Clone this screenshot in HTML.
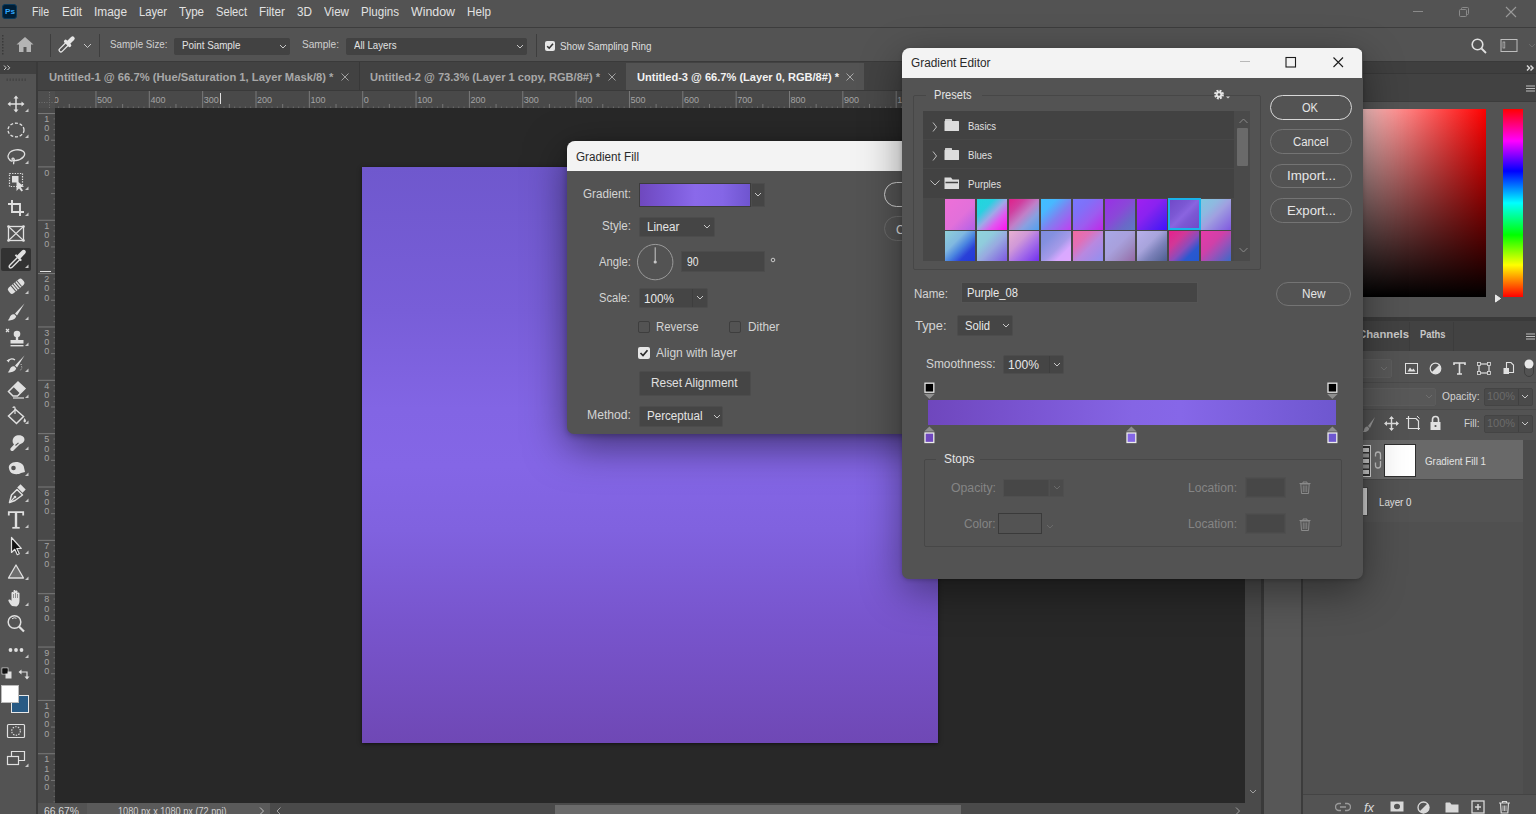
<!DOCTYPE html>
<html><head><meta charset="utf-8">
<style>
*{margin:0;padding:0;box-sizing:border-box}
html,body{width:1536px;height:814px;overflow:hidden;background:#282828;font-family:"Liberation Sans",sans-serif;position:relative}
.a{position:absolute}
.t{position:absolute;white-space:nowrap;line-height:1;transform-origin:0 0}
</style></head><body>
<div class="a" style="left:0px;top:0px;width:1536px;height:27px;background:#535353;"></div>
<div class="a" style="left:0px;top:27px;width:1536px;height:1px;background:#3d3d3d;"></div>
<div class="a" style="left:2px;top:4px;width:15px;height:15px;background:#001e36;border-radius:3px;border:1px solid #0a3a5c"></div>
<div class="t" style="left:4.5px;top:8.23px;font-size:8px;color:#31a8ff;font-weight:700;transform:scaleX(1.0207);">Ps</div>
<div class="t" style="left:32px;top:5.64px;font-size:12px;color:#e2e2e2;font-weight:400;transform:scaleX(0.8788);">File</div>
<div class="t" style="left:62px;top:5.64px;font-size:12px;color:#e2e2e2;font-weight:400;transform:scaleX(0.9668);">Edit</div>
<div class="t" style="left:94px;top:5.64px;font-size:12px;color:#e2e2e2;font-weight:400;transform:scaleX(0.9892);">Image</div>
<div class="t" style="left:139px;top:5.64px;font-size:12px;color:#e2e2e2;font-weight:400;transform:scaleX(0.9324);">Layer</div>
<div class="t" style="left:179px;top:5.64px;font-size:12px;color:#e2e2e2;font-weight:400;transform:scaleX(0.9610);">Type</div>
<div class="t" style="left:216px;top:5.64px;font-size:12px;color:#e2e2e2;font-weight:400;transform:scaleX(0.9293);">Select</div>
<div class="t" style="left:259px;top:5.64px;font-size:12px;color:#e2e2e2;font-weight:400;transform:scaleX(0.9748);">Filter</div>
<div class="t" style="left:297px;top:5.64px;font-size:12px;color:#e2e2e2;font-weight:400;transform:scaleX(0.9776);">3D</div>
<div class="t" style="left:324px;top:5.64px;font-size:12px;color:#e2e2e2;font-weight:400;transform:scaleX(0.9691);">View</div>
<div class="t" style="left:361px;top:5.64px;font-size:12px;color:#e2e2e2;font-weight:400;transform:scaleX(0.9655);">Plugins</div>
<div class="t" style="left:411px;top:5.64px;font-size:12px;color:#e2e2e2;font-weight:400;transform:scaleX(1.0307);">Window</div>
<div class="t" style="left:467px;top:5.64px;font-size:12px;color:#e2e2e2;font-weight:400;transform:scaleX(0.9722);">Help</div>
<div class="a" style="left:1413px;top:11px;width:10px;height:1px;background:#8a8a8a;"></div>
<svg class="a" style="left:1458px;top:6px;" width="12" height="12" viewBox="0 0 12 12"><rect x="1.5" y="3.5" width="7" height="7" rx="1" fill="none" stroke="#8a8a8a"/><path d="M3.5 3.5V2.5a1 1 0 0 1 1-1h5a1 1 0 0 1 1 1v5a1 1 0 0 1-1 1h-1" fill="none" stroke="#8a8a8a"/></svg>
<svg class="a" style="left:1505px;top:6px;" width="12" height="12" viewBox="0 0 12 12"><path d="M1 1L11 11M11 1L1 11" stroke="#9a9a9a" stroke-width="1.1"/></svg>
<div class="a" style="left:0px;top:28px;width:1536px;height:33px;background:#535353;"></div>
<div class="a" style="left:0px;top:61px;width:1536px;height:1px;background:#3a3a3a;"></div>
<svg class="a" style="left:1px;top:34px;" width="4" height="21" viewBox="0 0 4 21"><rect x="1" y="1" width="1.5" height="1.5" fill="#3a3a3a"/><rect x="1" y="4" width="1.5" height="1.5" fill="#3a3a3a"/><rect x="1" y="7" width="1.5" height="1.5" fill="#3a3a3a"/><rect x="1" y="10" width="1.5" height="1.5" fill="#3a3a3a"/><rect x="1" y="13" width="1.5" height="1.5" fill="#3a3a3a"/><rect x="1" y="16" width="1.5" height="1.5" fill="#3a3a3a"/><rect x="1" y="19" width="1.5" height="1.5" fill="#3a3a3a"/></svg>
<svg class="a" style="left:16px;top:36px;" width="18" height="17" viewBox="0 0 18 17"><path d="M9 1L0.5 8.5H3V16H7.5V11H10.5V16H15V8.5H17.5Z" fill="#b4b4b4"/></svg>
<div class="a" style="left:50px;top:34px;width:1px;height:23px;background:#3e3e3e;"></div>
<svg class="a" style="left:58px;top:35px;" width="18" height="18" viewBox="0 0 18 18"><path d="M9.3 8.7L2.9 15.1" stroke="#e6e6e6" stroke-width="4.8" stroke-linecap="round"/><path d="M9.3 8.7L2.9 15.1" stroke="#535353" stroke-width="2.3" stroke-linecap="round"/><path d="M7.6 6.4L11.6 10.4" stroke="#e6e6e6" stroke-width="3.4" stroke-linecap="round"/><path d="M10.5 7.5L14.6 3.4" stroke="#e6e6e6" stroke-width="4.2" stroke-linecap="round"/></svg>
<svg class="a" style="left:83px;top:43px;" width="9" height="6" viewBox="0 0 9 6"><path d="M1 1L4.5 4.5L8 1" fill="none" stroke="#c8c8c8" stroke-width="1"/></svg>
<div class="a" style="left:99px;top:34px;width:1px;height:23px;background:#3e3e3e;"></div>
<div class="t" style="left:109.5px;top:38.99px;font-size:11px;color:#cfcfcf;font-weight:400;transform:scaleX(0.8872);">Sample Size:</div>
<div class="a" style="left:174px;top:38px;width:116px;height:17px;background:#424242;border-radius:2px"></div>
<div class="t" style="left:181.5px;top:40.19px;font-size:11px;color:#e2e2e2;font-weight:400;transform:scaleX(0.8940);">Point Sample</div>
<svg class="a" style="left:279px;top:44px;" width="8" height="6" viewBox="0 0 8 6"><path d="M1 1L4 4L7 1" fill="none" stroke="#c8c8c8" stroke-width="1"/></svg>
<div class="t" style="left:302.4px;top:38.99px;font-size:11px;color:#cfcfcf;font-weight:400;transform:scaleX(0.9168);">Sample:</div>
<div class="a" style="left:346px;top:38px;width:181px;height:17px;background:#424242;border-radius:2px"></div>
<div class="t" style="left:353.5px;top:40.19px;font-size:11px;color:#e2e2e2;font-weight:400;transform:scaleX(0.8800);">All Layers</div>
<svg class="a" style="left:516px;top:44px;" width="8" height="6" viewBox="0 0 8 6"><path d="M1 1L4 4L7 1" fill="none" stroke="#c8c8c8" stroke-width="1"/></svg>
<div class="a" style="left:536px;top:34px;width:1px;height:23px;background:#3e3e3e;"></div>
<div class="a" style="left:545px;top:41px;width:10px;height:10px;background:#e6e6e6;border-radius:2px"></div>
<svg class="a" style="left:545px;top:41px;" width="10" height="10" viewBox="0 0 10 10"><path d="M2.2 5.2L4.2 7.2L8 2.8" fill="none" stroke="#333" stroke-width="1.6"/></svg>
<div class="t" style="left:560.4px;top:41.19px;font-size:11px;color:#dedede;font-weight:400;transform:scaleX(0.8960);">Show Sampling Ring</div>
<svg class="a" style="left:1471px;top:38px;" width="17" height="16" viewBox="0 0 17 16"><circle cx="6.5" cy="6.5" r="5.3" fill="none" stroke="#e0e0e0" stroke-width="1.6"/><path d="M10.5 10.5L15 15" stroke="#e0e0e0" stroke-width="1.8"/></svg>
<svg class="a" style="left:1500px;top:38px;" width="19" height="15" viewBox="0 0 19 15"><rect x="1" y="1.5" width="16" height="12" fill="none" stroke="#bdbdbd" stroke-width="1"/><rect x="3" y="4" width="1.8" height="6" fill="none" stroke="#bdbdbd" stroke-width=".7"/></svg>
<svg class="a" style="left:1528px;top:43px;" width="8" height="6" viewBox="0 0 8 6"><path d="M1 1L4 4L7 1" fill="none" stroke="#6a6a6a" stroke-width="1"/></svg>
<div class="a" style="left:0px;top:62px;width:36px;height:752px;background:#535353;"></div>
<div class="a" style="left:0px;top:62px;width:36px;height:12px;background:#404040;"></div>
<svg class="a" style="left:3px;top:64px;" width="9" height="8" viewBox="0 0 9 8"><path d="M1 1.5L3.2 3.8L1 6M4.5 1.5L6.7 3.8L4.5 6" fill="none" stroke="#d0d0d0" stroke-width="1"/></svg>
<svg class="a" style="left:6px;top:78px;" width="21" height="4" viewBox="0 0 21 4"><rect x="0.5" y="0.5" width="1.4" height="2.5" fill="#444"/><rect x="3.5" y="0.5" width="1.4" height="2.5" fill="#444"/><rect x="6.5" y="0.5" width="1.4" height="2.5" fill="#444"/><rect x="9.5" y="0.5" width="1.4" height="2.5" fill="#444"/><rect x="12.5" y="0.5" width="1.4" height="2.5" fill="#444"/><rect x="15.5" y="0.5" width="1.4" height="2.5" fill="#444"/><rect x="18.5" y="0.5" width="1.4" height="2.5" fill="#444"/></svg>
<div class="a" style="left:36px;top:62px;width:2px;height:752px;background:#3a3a3a;"></div>
<div class="a" style="left:38px;top:62px;width:1223px;height:28px;background:#424242;"></div>
<div class="a" style="left:38px;top:90px;width:1223px;height:1px;background:#3a3a3a;"></div>
<div class="a" style="left:38px;top:91px;width:1223px;height:17px;background:#494949;"></div>
<div class="a" style="left:38px;top:108px;width:17px;height:695px;background:#494949;"></div>
<div class="a" style="left:55px;top:108px;width:1190px;height:695px;background:#282828;"></div>
<div class="a" style="left:359px;top:62px;width:1px;height:28px;background:#383838;"></div>
<div class="a" style="left:626px;top:63px;width:238px;height:27px;background:#535353;"></div>
<div class="t" style="left:49.4px;top:72.07px;font-size:11.5px;color:#a8a8a8;font-weight:700;transform:scaleX(0.9750);">Untitled-1 @ 66.7% (Hue/Saturation 1, Layer Mask/8) *</div>
<svg class="a" style="left:341px;top:73px;" width="8" height="8" viewBox="0 0 8 8"><path d="M.5 .5L7.5 7.5M7.5 .5L.5 7.5" stroke="#a0a0a0" stroke-width="1"/></svg>
<div class="t" style="left:370px;top:72.07px;font-size:11.5px;color:#a8a8a8;font-weight:700;transform:scaleX(0.9617);">Untitled-2 @ 73.3% (Layer 1 copy, RGB/8#) *</div>
<svg class="a" style="left:608px;top:73px;" width="8" height="8" viewBox="0 0 8 8"><path d="M.5 .5L7.5 7.5M7.5 .5L.5 7.5" stroke="#a0a0a0" stroke-width="1"/></svg>
<div class="t" style="left:636.5px;top:72.07px;font-size:11.5px;color:#f2f2f2;font-weight:700;transform:scaleX(0.9620);">Untitled-3 @ 66.7% (Layer 0, RGB/8#) *</div>
<svg class="a" style="left:846px;top:73px;" width="8" height="8" viewBox="0 0 8 8"><path d="M.5 .5L7.5 7.5M7.5 .5L.5 7.5" stroke="#a8a8a8" stroke-width="1"/></svg>
<svg class="a" style="left:55px;top:91px;" width="1190" height="17" viewBox="0 0 1190 17"><rect x="3.10" y="15.5" width="1" height="1.5" fill="#6a6a6a"/><rect x="8.44" y="15.5" width="1" height="1.5" fill="#6a6a6a"/><rect x="13.77" y="13" width="1" height="4" fill="#767676"/><rect x="19.11" y="15.5" width="1" height="1.5" fill="#6a6a6a"/><rect x="24.44" y="15.5" width="1" height="1.5" fill="#6a6a6a"/><rect x="29.78" y="15.5" width="1" height="1.5" fill="#6a6a6a"/><rect x="35.12" y="15.5" width="1" height="1.5" fill="#6a6a6a"/><rect x="40.45" y="0" width="1" height="17" fill="#7a7a7a"/><rect x="45.78" y="15.5" width="1" height="1.5" fill="#6a6a6a"/><rect x="51.12" y="15.5" width="1" height="1.5" fill="#6a6a6a"/><rect x="56.45" y="15.5" width="1" height="1.5" fill="#6a6a6a"/><rect x="61.79" y="15.5" width="1" height="1.5" fill="#6a6a6a"/><rect x="67.12" y="13" width="1" height="4" fill="#767676"/><rect x="72.46" y="15.5" width="1" height="1.5" fill="#6a6a6a"/><rect x="77.79" y="15.5" width="1" height="1.5" fill="#6a6a6a"/><rect x="83.13" y="15.5" width="1" height="1.5" fill="#6a6a6a"/><rect x="88.47" y="15.5" width="1" height="1.5" fill="#6a6a6a"/><rect x="93.80" y="0" width="1" height="17" fill="#7a7a7a"/><rect x="99.13" y="15.5" width="1" height="1.5" fill="#6a6a6a"/><rect x="104.47" y="15.5" width="1" height="1.5" fill="#6a6a6a"/><rect x="109.80" y="15.5" width="1" height="1.5" fill="#6a6a6a"/><rect x="115.14" y="15.5" width="1" height="1.5" fill="#6a6a6a"/><rect x="120.47" y="13" width="1" height="4" fill="#767676"/><rect x="125.81" y="15.5" width="1" height="1.5" fill="#6a6a6a"/><rect x="131.14" y="15.5" width="1" height="1.5" fill="#6a6a6a"/><rect x="136.48" y="15.5" width="1" height="1.5" fill="#6a6a6a"/><rect x="141.81" y="15.5" width="1" height="1.5" fill="#6a6a6a"/><rect x="147.15" y="0" width="1" height="17" fill="#7a7a7a"/><rect x="152.48" y="15.5" width="1" height="1.5" fill="#6a6a6a"/><rect x="157.82" y="15.5" width="1" height="1.5" fill="#6a6a6a"/><rect x="163.15" y="15.5" width="1" height="1.5" fill="#6a6a6a"/><rect x="168.49" y="15.5" width="1" height="1.5" fill="#6a6a6a"/><rect x="173.82" y="13" width="1" height="4" fill="#767676"/><rect x="179.16" y="15.5" width="1" height="1.5" fill="#6a6a6a"/><rect x="184.50" y="15.5" width="1" height="1.5" fill="#6a6a6a"/><rect x="189.83" y="15.5" width="1" height="1.5" fill="#6a6a6a"/><rect x="195.16" y="15.5" width="1" height="1.5" fill="#6a6a6a"/><rect x="200.50" y="0" width="1" height="17" fill="#7a7a7a"/><rect x="205.83" y="15.5" width="1" height="1.5" fill="#6a6a6a"/><rect x="211.17" y="15.5" width="1" height="1.5" fill="#6a6a6a"/><rect x="216.50" y="15.5" width="1" height="1.5" fill="#6a6a6a"/><rect x="221.84" y="15.5" width="1" height="1.5" fill="#6a6a6a"/><rect x="227.17" y="13" width="1" height="4" fill="#767676"/><rect x="232.51" y="15.5" width="1" height="1.5" fill="#6a6a6a"/><rect x="237.84" y="15.5" width="1" height="1.5" fill="#6a6a6a"/><rect x="243.18" y="15.5" width="1" height="1.5" fill="#6a6a6a"/><rect x="248.51" y="15.5" width="1" height="1.5" fill="#6a6a6a"/><rect x="253.85" y="0" width="1" height="17" fill="#7a7a7a"/><rect x="259.19" y="15.5" width="1" height="1.5" fill="#6a6a6a"/><rect x="264.52" y="15.5" width="1" height="1.5" fill="#6a6a6a"/><rect x="269.86" y="15.5" width="1" height="1.5" fill="#6a6a6a"/><rect x="275.19" y="15.5" width="1" height="1.5" fill="#6a6a6a"/><rect x="280.52" y="13" width="1" height="4" fill="#767676"/><rect x="285.86" y="15.5" width="1" height="1.5" fill="#6a6a6a"/><rect x="291.19" y="15.5" width="1" height="1.5" fill="#6a6a6a"/><rect x="296.53" y="15.5" width="1" height="1.5" fill="#6a6a6a"/><rect x="301.87" y="15.5" width="1" height="1.5" fill="#6a6a6a"/><rect x="307.20" y="0" width="1" height="17" fill="#7a7a7a"/><rect x="312.53" y="15.5" width="1" height="1.5" fill="#6a6a6a"/><rect x="317.87" y="15.5" width="1" height="1.5" fill="#6a6a6a"/><rect x="323.20" y="15.5" width="1" height="1.5" fill="#6a6a6a"/><rect x="328.54" y="15.5" width="1" height="1.5" fill="#6a6a6a"/><rect x="333.88" y="13" width="1" height="4" fill="#767676"/><rect x="339.21" y="15.5" width="1" height="1.5" fill="#6a6a6a"/><rect x="344.54" y="15.5" width="1" height="1.5" fill="#6a6a6a"/><rect x="349.88" y="15.5" width="1" height="1.5" fill="#6a6a6a"/><rect x="355.21" y="15.5" width="1" height="1.5" fill="#6a6a6a"/><rect x="360.55" y="0" width="1" height="17" fill="#7a7a7a"/><rect x="365.88" y="15.5" width="1" height="1.5" fill="#6a6a6a"/><rect x="371.22" y="15.5" width="1" height="1.5" fill="#6a6a6a"/><rect x="376.56" y="15.5" width="1" height="1.5" fill="#6a6a6a"/><rect x="381.89" y="15.5" width="1" height="1.5" fill="#6a6a6a"/><rect x="387.23" y="13" width="1" height="4" fill="#767676"/><rect x="392.56" y="15.5" width="1" height="1.5" fill="#6a6a6a"/><rect x="397.89" y="15.5" width="1" height="1.5" fill="#6a6a6a"/><rect x="403.23" y="15.5" width="1" height="1.5" fill="#6a6a6a"/><rect x="408.56" y="15.5" width="1" height="1.5" fill="#6a6a6a"/><rect x="413.90" y="0" width="1" height="17" fill="#7a7a7a"/><rect x="419.24" y="15.5" width="1" height="1.5" fill="#6a6a6a"/><rect x="424.57" y="15.5" width="1" height="1.5" fill="#6a6a6a"/><rect x="429.90" y="15.5" width="1" height="1.5" fill="#6a6a6a"/><rect x="435.24" y="15.5" width="1" height="1.5" fill="#6a6a6a"/><rect x="440.57" y="13" width="1" height="4" fill="#767676"/><rect x="445.91" y="15.5" width="1" height="1.5" fill="#6a6a6a"/><rect x="451.25" y="15.5" width="1" height="1.5" fill="#6a6a6a"/><rect x="456.58" y="15.5" width="1" height="1.5" fill="#6a6a6a"/><rect x="461.91" y="15.5" width="1" height="1.5" fill="#6a6a6a"/><rect x="467.25" y="0" width="1" height="17" fill="#7a7a7a"/><rect x="472.59" y="15.5" width="1" height="1.5" fill="#6a6a6a"/><rect x="477.92" y="15.5" width="1" height="1.5" fill="#6a6a6a"/><rect x="483.25" y="15.5" width="1" height="1.5" fill="#6a6a6a"/><rect x="488.59" y="15.5" width="1" height="1.5" fill="#6a6a6a"/><rect x="493.92" y="13" width="1" height="4" fill="#767676"/><rect x="499.26" y="15.5" width="1" height="1.5" fill="#6a6a6a"/><rect x="504.60" y="15.5" width="1" height="1.5" fill="#6a6a6a"/><rect x="509.93" y="15.5" width="1" height="1.5" fill="#6a6a6a"/><rect x="515.26" y="15.5" width="1" height="1.5" fill="#6a6a6a"/><rect x="520.60" y="0" width="1" height="17" fill="#7a7a7a"/><rect x="525.93" y="15.5" width="1" height="1.5" fill="#6a6a6a"/><rect x="531.27" y="15.5" width="1" height="1.5" fill="#6a6a6a"/><rect x="536.61" y="15.5" width="1" height="1.5" fill="#6a6a6a"/><rect x="541.94" y="15.5" width="1" height="1.5" fill="#6a6a6a"/><rect x="547.27" y="13" width="1" height="4" fill="#767676"/><rect x="552.61" y="15.5" width="1" height="1.5" fill="#6a6a6a"/><rect x="557.94" y="15.5" width="1" height="1.5" fill="#6a6a6a"/><rect x="563.28" y="15.5" width="1" height="1.5" fill="#6a6a6a"/><rect x="568.62" y="15.5" width="1" height="1.5" fill="#6a6a6a"/><rect x="573.95" y="0" width="1" height="17" fill="#7a7a7a"/><rect x="579.28" y="15.5" width="1" height="1.5" fill="#6a6a6a"/><rect x="584.62" y="15.5" width="1" height="1.5" fill="#6a6a6a"/><rect x="589.95" y="15.5" width="1" height="1.5" fill="#6a6a6a"/><rect x="595.29" y="15.5" width="1" height="1.5" fill="#6a6a6a"/><rect x="600.62" y="13" width="1" height="4" fill="#767676"/><rect x="605.96" y="15.5" width="1" height="1.5" fill="#6a6a6a"/><rect x="611.30" y="15.5" width="1" height="1.5" fill="#6a6a6a"/><rect x="616.63" y="15.5" width="1" height="1.5" fill="#6a6a6a"/><rect x="621.97" y="15.5" width="1" height="1.5" fill="#6a6a6a"/><rect x="627.30" y="0" width="1" height="17" fill="#7a7a7a"/><rect x="632.63" y="15.5" width="1" height="1.5" fill="#6a6a6a"/><rect x="637.97" y="15.5" width="1" height="1.5" fill="#6a6a6a"/><rect x="643.31" y="15.5" width="1" height="1.5" fill="#6a6a6a"/><rect x="648.64" y="15.5" width="1" height="1.5" fill="#6a6a6a"/><rect x="653.98" y="13" width="1" height="4" fill="#767676"/><rect x="659.31" y="15.5" width="1" height="1.5" fill="#6a6a6a"/><rect x="664.64" y="15.5" width="1" height="1.5" fill="#6a6a6a"/><rect x="669.98" y="15.5" width="1" height="1.5" fill="#6a6a6a"/><rect x="675.32" y="15.5" width="1" height="1.5" fill="#6a6a6a"/><rect x="680.65" y="0" width="1" height="17" fill="#7a7a7a"/><rect x="685.98" y="15.5" width="1" height="1.5" fill="#6a6a6a"/><rect x="691.32" y="15.5" width="1" height="1.5" fill="#6a6a6a"/><rect x="696.65" y="15.5" width="1" height="1.5" fill="#6a6a6a"/><rect x="701.99" y="15.5" width="1" height="1.5" fill="#6a6a6a"/><rect x="707.33" y="13" width="1" height="4" fill="#767676"/><rect x="712.66" y="15.5" width="1" height="1.5" fill="#6a6a6a"/><rect x="718.00" y="15.5" width="1" height="1.5" fill="#6a6a6a"/><rect x="723.33" y="15.5" width="1" height="1.5" fill="#6a6a6a"/><rect x="728.66" y="15.5" width="1" height="1.5" fill="#6a6a6a"/><rect x="734.00" y="0" width="1" height="17" fill="#7a7a7a"/><rect x="739.34" y="15.5" width="1" height="1.5" fill="#6a6a6a"/><rect x="744.67" y="15.5" width="1" height="1.5" fill="#6a6a6a"/><rect x="750.01" y="15.5" width="1" height="1.5" fill="#6a6a6a"/><rect x="755.34" y="15.5" width="1" height="1.5" fill="#6a6a6a"/><rect x="760.67" y="13" width="1" height="4" fill="#767676"/><rect x="766.01" y="15.5" width="1" height="1.5" fill="#6a6a6a"/><rect x="771.35" y="15.5" width="1" height="1.5" fill="#6a6a6a"/><rect x="776.68" y="15.5" width="1" height="1.5" fill="#6a6a6a"/><rect x="782.02" y="15.5" width="1" height="1.5" fill="#6a6a6a"/><rect x="787.35" y="0" width="1" height="17" fill="#7a7a7a"/><rect x="792.68" y="15.5" width="1" height="1.5" fill="#6a6a6a"/><rect x="798.02" y="15.5" width="1" height="1.5" fill="#6a6a6a"/><rect x="803.36" y="15.5" width="1" height="1.5" fill="#6a6a6a"/><rect x="808.69" y="15.5" width="1" height="1.5" fill="#6a6a6a"/><rect x="814.02" y="13" width="1" height="4" fill="#767676"/><rect x="819.36" y="15.5" width="1" height="1.5" fill="#6a6a6a"/><rect x="824.69" y="15.5" width="1" height="1.5" fill="#6a6a6a"/><rect x="830.03" y="15.5" width="1" height="1.5" fill="#6a6a6a"/><rect x="835.37" y="15.5" width="1" height="1.5" fill="#6a6a6a"/><rect x="840.70" y="0" width="1" height="17" fill="#7a7a7a"/><rect x="846.04" y="15.5" width="1" height="1.5" fill="#6a6a6a"/><rect x="851.37" y="15.5" width="1" height="1.5" fill="#6a6a6a"/><rect x="856.71" y="15.5" width="1" height="1.5" fill="#6a6a6a"/><rect x="862.04" y="15.5" width="1" height="1.5" fill="#6a6a6a"/><rect x="867.38" y="13" width="1" height="4" fill="#767676"/><rect x="872.71" y="15.5" width="1" height="1.5" fill="#6a6a6a"/><rect x="878.05" y="15.5" width="1" height="1.5" fill="#6a6a6a"/><rect x="883.38" y="15.5" width="1" height="1.5" fill="#6a6a6a"/><rect x="888.71" y="15.5" width="1" height="1.5" fill="#6a6a6a"/><rect x="894.05" y="0" width="1" height="17" fill="#7a7a7a"/><rect x="899.38" y="15.5" width="1" height="1.5" fill="#6a6a6a"/><rect x="904.72" y="15.5" width="1" height="1.5" fill="#6a6a6a"/><rect x="910.06" y="15.5" width="1" height="1.5" fill="#6a6a6a"/><rect x="915.39" y="15.5" width="1" height="1.5" fill="#6a6a6a"/><rect x="920.72" y="13" width="1" height="4" fill="#767676"/><rect x="926.06" y="15.5" width="1" height="1.5" fill="#6a6a6a"/><rect x="931.39" y="15.5" width="1" height="1.5" fill="#6a6a6a"/><rect x="936.73" y="15.5" width="1" height="1.5" fill="#6a6a6a"/><rect x="942.07" y="15.5" width="1" height="1.5" fill="#6a6a6a"/><rect x="947.40" y="0" width="1" height="17" fill="#7a7a7a"/><rect x="952.73" y="15.5" width="1" height="1.5" fill="#6a6a6a"/><rect x="958.07" y="15.5" width="1" height="1.5" fill="#6a6a6a"/><rect x="963.40" y="15.5" width="1" height="1.5" fill="#6a6a6a"/><rect x="968.74" y="15.5" width="1" height="1.5" fill="#6a6a6a"/><rect x="974.08" y="13" width="1" height="4" fill="#767676"/><rect x="979.41" y="15.5" width="1" height="1.5" fill="#6a6a6a"/><rect x="984.74" y="15.5" width="1" height="1.5" fill="#6a6a6a"/><rect x="990.08" y="15.5" width="1" height="1.5" fill="#6a6a6a"/><rect x="995.41" y="15.5" width="1" height="1.5" fill="#6a6a6a"/><rect x="1000.75" y="0" width="1" height="17" fill="#7a7a7a"/><rect x="1006.09" y="15.5" width="1" height="1.5" fill="#6a6a6a"/><rect x="1011.42" y="15.5" width="1" height="1.5" fill="#6a6a6a"/><rect x="1016.76" y="15.5" width="1" height="1.5" fill="#6a6a6a"/><rect x="1022.09" y="15.5" width="1" height="1.5" fill="#6a6a6a"/><rect x="1027.42" y="13" width="1" height="4" fill="#767676"/><rect x="1032.76" y="15.5" width="1" height="1.5" fill="#6a6a6a"/><rect x="1038.10" y="15.5" width="1" height="1.5" fill="#6a6a6a"/><rect x="1043.43" y="15.5" width="1" height="1.5" fill="#6a6a6a"/><rect x="1048.77" y="15.5" width="1" height="1.5" fill="#6a6a6a"/><rect x="1054.10" y="0" width="1" height="17" fill="#7a7a7a"/><rect x="1059.43" y="15.5" width="1" height="1.5" fill="#6a6a6a"/><rect x="1064.77" y="15.5" width="1" height="1.5" fill="#6a6a6a"/><rect x="1070.11" y="15.5" width="1" height="1.5" fill="#6a6a6a"/><rect x="1075.44" y="15.5" width="1" height="1.5" fill="#6a6a6a"/><rect x="1080.78" y="13" width="1" height="4" fill="#767676"/><rect x="1086.11" y="15.5" width="1" height="1.5" fill="#6a6a6a"/><rect x="1091.44" y="15.5" width="1" height="1.5" fill="#6a6a6a"/><rect x="1096.78" y="15.5" width="1" height="1.5" fill="#6a6a6a"/><rect x="1102.12" y="15.5" width="1" height="1.5" fill="#6a6a6a"/><rect x="1107.45" y="0" width="1" height="17" fill="#7a7a7a"/><rect x="1112.79" y="15.5" width="1" height="1.5" fill="#6a6a6a"/><rect x="1118.12" y="15.5" width="1" height="1.5" fill="#6a6a6a"/><rect x="1123.46" y="15.5" width="1" height="1.5" fill="#6a6a6a"/><rect x="1128.79" y="15.5" width="1" height="1.5" fill="#6a6a6a"/><rect x="1134.12" y="13" width="1" height="4" fill="#767676"/><rect x="1139.46" y="15.5" width="1" height="1.5" fill="#6a6a6a"/><rect x="1144.80" y="15.5" width="1" height="1.5" fill="#6a6a6a"/><rect x="1150.13" y="15.5" width="1" height="1.5" fill="#6a6a6a"/><rect x="1155.46" y="15.5" width="1" height="1.5" fill="#6a6a6a"/><rect x="1160.80" y="0" width="1" height="17" fill="#7a7a7a"/><rect x="1166.13" y="15.5" width="1" height="1.5" fill="#6a6a6a"/><rect x="1171.47" y="15.5" width="1" height="1.5" fill="#6a6a6a"/><rect x="1176.81" y="15.5" width="1" height="1.5" fill="#6a6a6a"/><rect x="1182.14" y="15.5" width="1" height="1.5" fill="#6a6a6a"/><rect x="1187.47" y="13" width="1" height="4" fill="#767676"/></svg>
<div class="a" style="left:55px;top:91px;width:1190px;height:17px;overflow:hidden">
<div class="t" style="left:-11.3px;top:5.38px;font-size:9px;color:#a4a4a4;font-weight:400;">600</div>
<div class="t" style="left:42.05px;top:5.38px;font-size:9px;color:#a4a4a4;font-weight:400;">500</div>
<div class="t" style="left:95.4px;top:5.38px;font-size:9px;color:#a4a4a4;font-weight:400;">400</div>
<div class="t" style="left:148.75px;top:5.38px;font-size:9px;color:#a4a4a4;font-weight:400;">300</div>
<div class="t" style="left:202.1px;top:5.38px;font-size:9px;color:#a4a4a4;font-weight:400;">200</div>
<div class="t" style="left:255.45px;top:5.38px;font-size:9px;color:#a4a4a4;font-weight:400;">100</div>
<div class="t" style="left:308.8px;top:5.38px;font-size:9px;color:#a4a4a4;font-weight:400;">0</div>
<div class="t" style="left:362.15px;top:5.38px;font-size:9px;color:#a4a4a4;font-weight:400;">100</div>
<div class="t" style="left:415.5px;top:5.38px;font-size:9px;color:#a4a4a4;font-weight:400;">200</div>
<div class="t" style="left:468.85px;top:5.38px;font-size:9px;color:#a4a4a4;font-weight:400;">300</div>
<div class="t" style="left:522.2px;top:5.38px;font-size:9px;color:#a4a4a4;font-weight:400;">400</div>
<div class="t" style="left:575.55px;top:5.38px;font-size:9px;color:#a4a4a4;font-weight:400;">500</div>
<div class="t" style="left:628.9px;top:5.38px;font-size:9px;color:#a4a4a4;font-weight:400;">600</div>
<div class="t" style="left:682.25px;top:5.38px;font-size:9px;color:#a4a4a4;font-weight:400;">700</div>
<div class="t" style="left:735.6px;top:5.38px;font-size:9px;color:#a4a4a4;font-weight:400;">800</div>
<div class="t" style="left:788.95px;top:5.38px;font-size:9px;color:#a4a4a4;font-weight:400;">900</div>
<div class="t" style="left:842.3px;top:5.38px;font-size:9px;color:#a4a4a4;font-weight:400;">1000</div>
<div class="t" style="left:895.65px;top:5.38px;font-size:9px;color:#a4a4a4;font-weight:400;">1100</div>
<div class="t" style="left:949.0px;top:5.38px;font-size:9px;color:#a4a4a4;font-weight:400;">1200</div>
<div class="t" style="left:1002.35px;top:5.38px;font-size:9px;color:#a4a4a4;font-weight:400;">1300</div>
<div class="t" style="left:1055.7px;top:5.38px;font-size:9px;color:#a4a4a4;font-weight:400;">1400</div>
<div class="t" style="left:1109.05px;top:5.38px;font-size:9px;color:#a4a4a4;font-weight:400;">1500</div>
<div class="t" style="left:1162.4px;top:5.38px;font-size:9px;color:#a4a4a4;font-weight:400;">1600</div>
</div>
<div class="a" style="left:220px;top:93px;width:1px;height:11px;background:#e0e0e0;"></div>
<div class="a" style="left:38px;top:91px;width:17px;height:17px;background:#4e4e4e;"></div>
<svg class="a" style="left:38px;top:91px;" width="17" height="17" viewBox="0 0 17 17"><path d="M11.5 1V17M1 11.5H17" stroke="#707070" stroke-width="1" stroke-dasharray="1 1.5"/></svg>
<svg class="a" style="left:38px;top:108px;" width="17" height="695" viewBox="0 0 17 695"><rect x="0" y="5.05" width="17" height="1" fill="#7a7a7a"/><rect x="15.5" y="10.39" width="1.5" height="1" fill="#6a6a6a"/><rect x="15.5" y="15.72" width="1.5" height="1" fill="#6a6a6a"/><rect x="15.5" y="21.06" width="1.5" height="1" fill="#6a6a6a"/><rect x="15.5" y="26.39" width="1.5" height="1" fill="#6a6a6a"/><rect x="13" y="31.72" width="4" height="1" fill="#767676"/><rect x="15.5" y="37.06" width="1.5" height="1" fill="#6a6a6a"/><rect x="15.5" y="42.40" width="1.5" height="1" fill="#6a6a6a"/><rect x="15.5" y="47.73" width="1.5" height="1" fill="#6a6a6a"/><rect x="15.5" y="53.06" width="1.5" height="1" fill="#6a6a6a"/><rect x="0" y="58.40" width="17" height="1" fill="#7a7a7a"/><rect x="15.5" y="63.74" width="1.5" height="1" fill="#6a6a6a"/><rect x="15.5" y="69.07" width="1.5" height="1" fill="#6a6a6a"/><rect x="15.5" y="74.41" width="1.5" height="1" fill="#6a6a6a"/><rect x="15.5" y="79.74" width="1.5" height="1" fill="#6a6a6a"/><rect x="13" y="85.08" width="4" height="1" fill="#767676"/><rect x="15.5" y="90.41" width="1.5" height="1" fill="#6a6a6a"/><rect x="15.5" y="95.75" width="1.5" height="1" fill="#6a6a6a"/><rect x="15.5" y="101.08" width="1.5" height="1" fill="#6a6a6a"/><rect x="15.5" y="106.42" width="1.5" height="1" fill="#6a6a6a"/><rect x="0" y="111.75" width="17" height="1" fill="#7a7a7a"/><rect x="15.5" y="117.09" width="1.5" height="1" fill="#6a6a6a"/><rect x="15.5" y="122.42" width="1.5" height="1" fill="#6a6a6a"/><rect x="15.5" y="127.75" width="1.5" height="1" fill="#6a6a6a"/><rect x="15.5" y="133.09" width="1.5" height="1" fill="#6a6a6a"/><rect x="13" y="138.43" width="4" height="1" fill="#767676"/><rect x="15.5" y="143.76" width="1.5" height="1" fill="#6a6a6a"/><rect x="15.5" y="149.10" width="1.5" height="1" fill="#6a6a6a"/><rect x="15.5" y="154.43" width="1.5" height="1" fill="#6a6a6a"/><rect x="15.5" y="159.76" width="1.5" height="1" fill="#6a6a6a"/><rect x="0" y="165.10" width="17" height="1" fill="#7a7a7a"/><rect x="15.5" y="170.44" width="1.5" height="1" fill="#6a6a6a"/><rect x="15.5" y="175.77" width="1.5" height="1" fill="#6a6a6a"/><rect x="15.5" y="181.11" width="1.5" height="1" fill="#6a6a6a"/><rect x="15.5" y="186.44" width="1.5" height="1" fill="#6a6a6a"/><rect x="13" y="191.77" width="4" height="1" fill="#767676"/><rect x="15.5" y="197.11" width="1.5" height="1" fill="#6a6a6a"/><rect x="15.5" y="202.45" width="1.5" height="1" fill="#6a6a6a"/><rect x="15.5" y="207.78" width="1.5" height="1" fill="#6a6a6a"/><rect x="15.5" y="213.12" width="1.5" height="1" fill="#6a6a6a"/><rect x="0" y="218.45" width="17" height="1" fill="#7a7a7a"/><rect x="15.5" y="223.79" width="1.5" height="1" fill="#6a6a6a"/><rect x="15.5" y="229.12" width="1.5" height="1" fill="#6a6a6a"/><rect x="15.5" y="234.46" width="1.5" height="1" fill="#6a6a6a"/><rect x="15.5" y="239.79" width="1.5" height="1" fill="#6a6a6a"/><rect x="13" y="245.12" width="4" height="1" fill="#767676"/><rect x="15.5" y="250.46" width="1.5" height="1" fill="#6a6a6a"/><rect x="15.5" y="255.80" width="1.5" height="1" fill="#6a6a6a"/><rect x="15.5" y="261.13" width="1.5" height="1" fill="#6a6a6a"/><rect x="15.5" y="266.47" width="1.5" height="1" fill="#6a6a6a"/><rect x="0" y="271.80" width="17" height="1" fill="#7a7a7a"/><rect x="15.5" y="277.13" width="1.5" height="1" fill="#6a6a6a"/><rect x="15.5" y="282.47" width="1.5" height="1" fill="#6a6a6a"/><rect x="15.5" y="287.81" width="1.5" height="1" fill="#6a6a6a"/><rect x="15.5" y="293.14" width="1.5" height="1" fill="#6a6a6a"/><rect x="13" y="298.48" width="4" height="1" fill="#767676"/><rect x="15.5" y="303.81" width="1.5" height="1" fill="#6a6a6a"/><rect x="15.5" y="309.14" width="1.5" height="1" fill="#6a6a6a"/><rect x="15.5" y="314.48" width="1.5" height="1" fill="#6a6a6a"/><rect x="15.5" y="319.82" width="1.5" height="1" fill="#6a6a6a"/><rect x="0" y="325.15" width="17" height="1" fill="#7a7a7a"/><rect x="15.5" y="330.49" width="1.5" height="1" fill="#6a6a6a"/><rect x="15.5" y="335.82" width="1.5" height="1" fill="#6a6a6a"/><rect x="15.5" y="341.15" width="1.5" height="1" fill="#6a6a6a"/><rect x="15.5" y="346.49" width="1.5" height="1" fill="#6a6a6a"/><rect x="13" y="351.83" width="4" height="1" fill="#767676"/><rect x="15.5" y="357.16" width="1.5" height="1" fill="#6a6a6a"/><rect x="15.5" y="362.50" width="1.5" height="1" fill="#6a6a6a"/><rect x="15.5" y="367.83" width="1.5" height="1" fill="#6a6a6a"/><rect x="15.5" y="373.17" width="1.5" height="1" fill="#6a6a6a"/><rect x="0" y="378.50" width="17" height="1" fill="#7a7a7a"/><rect x="15.5" y="383.84" width="1.5" height="1" fill="#6a6a6a"/><rect x="15.5" y="389.17" width="1.5" height="1" fill="#6a6a6a"/><rect x="15.5" y="394.50" width="1.5" height="1" fill="#6a6a6a"/><rect x="15.5" y="399.84" width="1.5" height="1" fill="#6a6a6a"/><rect x="13" y="405.18" width="4" height="1" fill="#767676"/><rect x="15.5" y="410.51" width="1.5" height="1" fill="#6a6a6a"/><rect x="15.5" y="415.85" width="1.5" height="1" fill="#6a6a6a"/><rect x="15.5" y="421.18" width="1.5" height="1" fill="#6a6a6a"/><rect x="15.5" y="426.51" width="1.5" height="1" fill="#6a6a6a"/><rect x="0" y="431.85" width="17" height="1" fill="#7a7a7a"/><rect x="15.5" y="437.18" width="1.5" height="1" fill="#6a6a6a"/><rect x="15.5" y="442.52" width="1.5" height="1" fill="#6a6a6a"/><rect x="15.5" y="447.86" width="1.5" height="1" fill="#6a6a6a"/><rect x="15.5" y="453.19" width="1.5" height="1" fill="#6a6a6a"/><rect x="13" y="458.52" width="4" height="1" fill="#767676"/><rect x="15.5" y="463.86" width="1.5" height="1" fill="#6a6a6a"/><rect x="15.5" y="469.20" width="1.5" height="1" fill="#6a6a6a"/><rect x="15.5" y="474.53" width="1.5" height="1" fill="#6a6a6a"/><rect x="15.5" y="479.87" width="1.5" height="1" fill="#6a6a6a"/><rect x="0" y="485.20" width="17" height="1" fill="#7a7a7a"/><rect x="15.5" y="490.53" width="1.5" height="1" fill="#6a6a6a"/><rect x="15.5" y="495.87" width="1.5" height="1" fill="#6a6a6a"/><rect x="15.5" y="501.21" width="1.5" height="1" fill="#6a6a6a"/><rect x="15.5" y="506.54" width="1.5" height="1" fill="#6a6a6a"/><rect x="13" y="511.88" width="4" height="1" fill="#767676"/><rect x="15.5" y="517.21" width="1.5" height="1" fill="#6a6a6a"/><rect x="15.5" y="522.54" width="1.5" height="1" fill="#6a6a6a"/><rect x="15.5" y="527.88" width="1.5" height="1" fill="#6a6a6a"/><rect x="15.5" y="533.22" width="1.5" height="1" fill="#6a6a6a"/><rect x="0" y="538.55" width="17" height="1" fill="#7a7a7a"/><rect x="15.5" y="543.88" width="1.5" height="1" fill="#6a6a6a"/><rect x="15.5" y="549.22" width="1.5" height="1" fill="#6a6a6a"/><rect x="15.5" y="554.56" width="1.5" height="1" fill="#6a6a6a"/><rect x="15.5" y="559.89" width="1.5" height="1" fill="#6a6a6a"/><rect x="13" y="565.23" width="4" height="1" fill="#767676"/><rect x="15.5" y="570.56" width="1.5" height="1" fill="#6a6a6a"/><rect x="15.5" y="575.89" width="1.5" height="1" fill="#6a6a6a"/><rect x="15.5" y="581.23" width="1.5" height="1" fill="#6a6a6a"/><rect x="15.5" y="586.57" width="1.5" height="1" fill="#6a6a6a"/><rect x="0" y="591.90" width="17" height="1" fill="#7a7a7a"/><rect x="15.5" y="597.24" width="1.5" height="1" fill="#6a6a6a"/><rect x="15.5" y="602.57" width="1.5" height="1" fill="#6a6a6a"/><rect x="15.5" y="607.91" width="1.5" height="1" fill="#6a6a6a"/><rect x="15.5" y="613.24" width="1.5" height="1" fill="#6a6a6a"/><rect x="13" y="618.58" width="4" height="1" fill="#767676"/><rect x="15.5" y="623.91" width="1.5" height="1" fill="#6a6a6a"/><rect x="15.5" y="629.25" width="1.5" height="1" fill="#6a6a6a"/><rect x="15.5" y="634.58" width="1.5" height="1" fill="#6a6a6a"/><rect x="15.5" y="639.91" width="1.5" height="1" fill="#6a6a6a"/><rect x="0" y="645.25" width="17" height="1" fill="#7a7a7a"/><rect x="15.5" y="650.58" width="1.5" height="1" fill="#6a6a6a"/><rect x="15.5" y="655.92" width="1.5" height="1" fill="#6a6a6a"/><rect x="15.5" y="661.25" width="1.5" height="1" fill="#6a6a6a"/><rect x="15.5" y="666.59" width="1.5" height="1" fill="#6a6a6a"/><rect x="13" y="671.92" width="4" height="1" fill="#767676"/><rect x="15.5" y="677.26" width="1.5" height="1" fill="#6a6a6a"/><rect x="15.5" y="682.59" width="1.5" height="1" fill="#6a6a6a"/><rect x="15.5" y="687.93" width="1.5" height="1" fill="#6a6a6a"/><rect x="15.5" y="693.26" width="1.5" height="1" fill="#6a6a6a"/></svg>
<div class="a" style="left:38px;top:108px;width:17px;height:695px;overflow:hidden">
<div class="t" style="left:6.2px;top:-46.12px;font-size:9px;color:#a4a4a4;font-weight:400;">2</div>
<div class="t" style="left:6.2px;top:-36.92px;font-size:9px;color:#a4a4a4;font-weight:400;">0</div>
<div class="t" style="left:6.2px;top:-27.72px;font-size:9px;color:#a4a4a4;font-weight:400;">0</div>
<div class="t" style="left:6.2px;top:7.23px;font-size:9px;color:#a4a4a4;font-weight:400;">1</div>
<div class="t" style="left:6.2px;top:16.43px;font-size:9px;color:#a4a4a4;font-weight:400;">0</div>
<div class="t" style="left:6.2px;top:25.63px;font-size:9px;color:#a4a4a4;font-weight:400;">0</div>
<div class="t" style="left:6.2px;top:60.58px;font-size:9px;color:#a4a4a4;font-weight:400;">0</div>
<div class="t" style="left:6.2px;top:113.93px;font-size:9px;color:#a4a4a4;font-weight:400;">1</div>
<div class="t" style="left:6.2px;top:123.13px;font-size:9px;color:#a4a4a4;font-weight:400;">0</div>
<div class="t" style="left:6.2px;top:132.33px;font-size:9px;color:#a4a4a4;font-weight:400;">0</div>
<div class="t" style="left:6.2px;top:167.28px;font-size:9px;color:#a4a4a4;font-weight:400;">2</div>
<div class="t" style="left:6.2px;top:176.48px;font-size:9px;color:#a4a4a4;font-weight:400;">0</div>
<div class="t" style="left:6.2px;top:185.68px;font-size:9px;color:#a4a4a4;font-weight:400;">0</div>
<div class="t" style="left:6.2px;top:220.63px;font-size:9px;color:#a4a4a4;font-weight:400;">3</div>
<div class="t" style="left:6.2px;top:229.83px;font-size:9px;color:#a4a4a4;font-weight:400;">0</div>
<div class="t" style="left:6.2px;top:239.03px;font-size:9px;color:#a4a4a4;font-weight:400;">0</div>
<div class="t" style="left:6.2px;top:273.98px;font-size:9px;color:#a4a4a4;font-weight:400;">4</div>
<div class="t" style="left:6.2px;top:283.18px;font-size:9px;color:#a4a4a4;font-weight:400;">0</div>
<div class="t" style="left:6.2px;top:292.38px;font-size:9px;color:#a4a4a4;font-weight:400;">0</div>
<div class="t" style="left:6.2px;top:327.33px;font-size:9px;color:#a4a4a4;font-weight:400;">5</div>
<div class="t" style="left:6.2px;top:336.53px;font-size:9px;color:#a4a4a4;font-weight:400;">0</div>
<div class="t" style="left:6.2px;top:345.73px;font-size:9px;color:#a4a4a4;font-weight:400;">0</div>
<div class="t" style="left:6.2px;top:380.68px;font-size:9px;color:#a4a4a4;font-weight:400;">6</div>
<div class="t" style="left:6.2px;top:389.88px;font-size:9px;color:#a4a4a4;font-weight:400;">0</div>
<div class="t" style="left:6.2px;top:399.08px;font-size:9px;color:#a4a4a4;font-weight:400;">0</div>
<div class="t" style="left:6.2px;top:434.03px;font-size:9px;color:#a4a4a4;font-weight:400;">7</div>
<div class="t" style="left:6.2px;top:443.23px;font-size:9px;color:#a4a4a4;font-weight:400;">0</div>
<div class="t" style="left:6.2px;top:452.43px;font-size:9px;color:#a4a4a4;font-weight:400;">0</div>
<div class="t" style="left:6.2px;top:487.38px;font-size:9px;color:#a4a4a4;font-weight:400;">8</div>
<div class="t" style="left:6.2px;top:496.58px;font-size:9px;color:#a4a4a4;font-weight:400;">0</div>
<div class="t" style="left:6.2px;top:505.78px;font-size:9px;color:#a4a4a4;font-weight:400;">0</div>
<div class="t" style="left:6.2px;top:540.73px;font-size:9px;color:#a4a4a4;font-weight:400;">9</div>
<div class="t" style="left:6.2px;top:549.93px;font-size:9px;color:#a4a4a4;font-weight:400;">0</div>
<div class="t" style="left:6.2px;top:559.13px;font-size:9px;color:#a4a4a4;font-weight:400;">0</div>
<div class="t" style="left:6.2px;top:594.08px;font-size:9px;color:#a4a4a4;font-weight:400;">1</div>
<div class="t" style="left:6.2px;top:603.28px;font-size:9px;color:#a4a4a4;font-weight:400;">0</div>
<div class="t" style="left:6.2px;top:612.48px;font-size:9px;color:#a4a4a4;font-weight:400;">0</div>
<div class="t" style="left:6.2px;top:621.68px;font-size:9px;color:#a4a4a4;font-weight:400;">0</div>
<div class="t" style="left:6.2px;top:647.43px;font-size:9px;color:#a4a4a4;font-weight:400;">1</div>
<div class="t" style="left:6.2px;top:656.63px;font-size:9px;color:#a4a4a4;font-weight:400;">1</div>
<div class="t" style="left:6.2px;top:665.83px;font-size:9px;color:#a4a4a4;font-weight:400;">0</div>
<div class="t" style="left:6.2px;top:675.03px;font-size:9px;color:#a4a4a4;font-weight:400;">0</div>
<div class="t" style="left:6.2px;top:700.78px;font-size:9px;color:#a4a4a4;font-weight:400;">1</div>
<div class="t" style="left:6.2px;top:709.98px;font-size:9px;color:#a4a4a4;font-weight:400;">2</div>
<div class="t" style="left:6.2px;top:719.18px;font-size:9px;color:#a4a4a4;font-weight:400;">0</div>
<div class="t" style="left:6.2px;top:728.38px;font-size:9px;color:#a4a4a4;font-weight:400;">0</div>
</div>
<div class="a" style="left:40px;top:271px;width:11px;height:1px;background:#e0e0e0;"></div>
<div class="a" style="left:362px;top:167px;width:576px;height:576px;background:linear-gradient(180deg,#6f58cd 0%,#785ed8 25%,#8265e4 42%,#8466e6 52%,#8062df 63%,#7855cd 79%,#6f48b5 100%);box-shadow:0 1px 4px rgba(0,0,0,.6)"></div>
<div class="a" style="left:38px;top:803px;width:1223px;height:11px;background:#535353;"></div>
<div class="t" style="left:44px;top:806.19px;font-size:11px;color:#d8d8d8;font-weight:400;transform:scaleX(0.9380);">66.67%</div>
<div class="a" style="left:87px;top:803px;width:183px;height:11px;background:#5a5a5a;"></div>
<div class="t" style="left:117.5px;top:807.03px;font-size:10px;color:#d0d0d0;font-weight:400;transform:scaleX(0.9162);">1080 px x 1080 px (72 ppi)</div>
<svg class="a" style="left:259px;top:807px;" width="6" height="8" viewBox="0 0 6 8"><path d="M1 .5L4.5 4L1 7.5" fill="none" stroke="#c0c0c0" stroke-width="1"/></svg>
<div class="a" style="left:270px;top:803px;width:975px;height:11px;background:#4a4a4a;"></div>
<svg class="a" style="left:276px;top:807px;" width="6" height="8" viewBox="0 0 6 8"><path d="M4.5 .5L1 4L4.5 7.5" fill="none" stroke="#a0a0a0" stroke-width="1"/></svg>
<div class="a" style="left:555px;top:805px;width:406px;height:9px;background:#6b6b6b;"></div>
<div class="a" style="left:1245px;top:108px;width:16px;height:695px;background:#4a4a4a;"></div>
<svg class="a" style="left:1249px;top:789px;" width="8" height="6" viewBox="0 0 8 6"><path d="M1 1L4 4L7 1" fill="none" stroke="#a0a0a0" stroke-width="1"/></svg>
<div class="a" style="left:1245px;top:803px;width:16px;height:11px;background:#4a4a4a;"></div>
<svg class="a" style="left:1235px;top:807px;" width="6" height="8" viewBox="0 0 6 8"><path d="M1 .5L4.5 4L1 7.5" fill="none" stroke="#a0a0a0" stroke-width="1"/></svg>
<div class="a" style="left:1261px;top:62px;width:3px;height:752px;background:#3a3a3a;"></div>
<div class="a" style="left:1px;top:248px;width:30px;height:23px;background:#323232;border-radius:2px"></div>
<svg class="a" style="left:4px;top:92px;" width="28" height="24" viewBox="0 0 28 24"><path d="M12 5V19M5 12H19" stroke="#e0e0e0" stroke-width="1.5"/><path d="M12 3.5L14.5 6.5H9.5ZM12 20.5L14.5 17.5H9.5ZM3.5 12L6.5 9.5V14.5ZM20.5 12L17.5 9.5V14.5Z" fill="#e0e0e0"/><path d="M24.5 16.5V20H21Z" fill="#c8c8c8"/></svg>
<svg class="a" style="left:4px;top:118px;" width="28" height="24" viewBox="0 0 28 24"><ellipse cx="12" cy="12" rx="8" ry="6.8" fill="none" stroke="#e0e0e0" stroke-width="1.3" stroke-dasharray="3 1.8"/><path d="M24.5 16.5V20H21Z" fill="#c8c8c8"/></svg>
<svg class="a" style="left:4px;top:144px;" width="28" height="24" viewBox="0 0 28 24"><path d="M8.5 17.5C4 16 3 12.5 5 9.5C7.5 5.5 16 4.5 19.5 7.5C22.5 10.5 19 15.5 12 16.5C10 16.8 8 16.2 8 15C8 13.5 10.5 13.8 10.3 16C10.2 17.5 9 18.8 9.8 20.2" fill="none" stroke="#e0e0e0" stroke-width="1.3"/><path d="M24.5 16.5V20H21Z" fill="#c8c8c8"/></svg>
<svg class="a" style="left:4px;top:170px;" width="28" height="24" viewBox="0 0 28 24"><rect x="5.5" y="3.5" width="13" height="13" fill="none" stroke="#e0e0e0" stroke-width="1.2" stroke-dasharray="1.3 1.3"/><rect x="8" y="6" width="6.5" height="6.5" fill="#e0e0e0"/><path d="M12.5 10.5L12.5 21L15 18.5L17.5 21.5L19 20.5L16.8 17.3L20 16.5Z" fill="#e0e0e0"/><path d="M24.5 16.5V20H21Z" fill="#c8c8c8"/></svg>
<svg class="a" style="left:4px;top:196px;" width="28" height="24" viewBox="0 0 28 24"><path d="M8 4V16H20M4 8H16V20" fill="none" stroke="#e0e0e0" stroke-width="1.9"/><path d="M24.5 16.5V20H21Z" fill="#c8c8c8"/></svg>
<svg class="a" style="left:4px;top:222px;" width="28" height="24" viewBox="0 0 28 24"><rect x="4.5" y="4.5" width="15" height="14" fill="none" stroke="#e0e0e0" stroke-width="1.3"/><path d="M4.5 4.5L19.5 18.5M19.5 4.5L4.5 18.5" stroke="#e0e0e0" stroke-width="1.1"/><circle cx="4.5" cy="4.5" r="1.3" fill="#e0e0e0"/><circle cx="19.5" cy="4.5" r="1.3" fill="#e0e0e0"/><circle cx="4.5" cy="18.5" r="1.3" fill="#e0e0e0"/><circle cx="19.5" cy="18.5" r="1.3" fill="#e0e0e0"/></svg>
<svg class="a" style="left:4px;top:248px;" width="28" height="24" viewBox="0 0 28 24"><path d="M14.2 8.8L6.2 16.8C5.2 17.8 5 19 5.6 19.6C6.2 20.2 7.4 20 8.4 19L16.4 11" fill="none" stroke="#e0e0e0" stroke-width="1.4"/><path d="M13 7.5L18 2.5C19 1.5 20.5 1.5 21.3 2.4C22.2 3.3 22 4.8 21 5.7L16.5 10.5L18 12L16.5 13.3L10.8 7.5L12.2 6Z" fill="#e0e0e0"/><path d="M24.5 16.5V20H21Z" fill="#c8c8c8"/></svg>
<svg class="a" style="left:4px;top:274px;" width="28" height="24" viewBox="0 0 28 24"><g transform="rotate(-40 12 12)"><rect x="3" y="8.5" width="18" height="7.5" rx="2.5" fill="#e0e0e0"/><path d="M8.5 8.5V16M11 8.5V16M13.5 8.5V16M16 8.5V16" stroke="#535353" stroke-width="1"/></g><path d="M24.5 16.5V20H21Z" fill="#c8c8c8"/></svg>
<svg class="a" style="left:4px;top:300px;" width="28" height="24" viewBox="0 0 28 24"><path d="M20.5 3.5L11 13.5L13 15.5Z" fill="#e0e0e0"/><path d="M10.3 14.2C7.5 13.8 6 16 5.5 18C5.2 19 4.5 19.8 3.8 20.2C7 21 11.5 19.5 12.2 16.3Z" fill="#e0e0e0"/><path d="M24.5 16.5V20H21Z" fill="#c8c8c8"/></svg>
<svg class="a" style="left:4px;top:326px;" width="28" height="24" viewBox="0 0 28 24"><circle cx="13" cy="8" r="3.3" fill="#e0e0e0"/><path d="M11.8 10.5H14.2V14H19.5V17.5H6.5V14H11.8Z" fill="#e0e0e0"/><rect x="6.5" y="19" width="13" height="1.4" fill="#e0e0e0"/><path d="M2 3L5 6M5 3L2 6" stroke="#e0e0e0" stroke-width="1.2"/><path d="M24.5 16.5V20H21Z" fill="#c8c8c8"/></svg>
<svg class="a" style="left:4px;top:352px;" width="28" height="24" viewBox="0 0 28 24"><path d="M20.5 3.5L11 13.5L13 15.5Z" fill="#e0e0e0"/><path d="M10.3 14.2C7.5 13.8 6 16 5.5 18C5.2 19 4.5 19.8 3.8 20.2C7 21 11.5 19.5 12.2 16.3Z" fill="#e0e0e0"/><path d="M4 9C6 6.5 9 6.5 11 8" fill="none" stroke="#e0e0e0" stroke-width="1.3"/><path d="M2.5 8.5L5.5 7L5 10.5Z" fill="#e0e0e0"/><path d="M17 12L18 16L16 19" fill="none" stroke="#e0e0e0" stroke-width=".9" stroke-dasharray="1 1.5"/><path d="M24.5 16.5V20H21Z" fill="#c8c8c8"/></svg>
<svg class="a" style="left:4px;top:378px;" width="28" height="24" viewBox="0 0 28 24"><path d="M14 4L21 10.5L13.5 18H9L4.5 13.5Z" fill="none" stroke="#e0e0e0" stroke-width="1.5"/><path d="M14 4L21 10.5L16 15.5L9.5 9Z" fill="#e0e0e0"/><path d="M9 20H20" stroke="#e0e0e0" stroke-width="1.2"/><path d="M24.5 16.5V20H21Z" fill="#c8c8c8"/></svg>
<svg class="a" style="left:4px;top:404px;" width="28" height="24" viewBox="0 0 28 24"><path d="M11.5 5.5L19.5 12.5L12.5 19.5L4.5 12Z" fill="none" stroke="#e0e0e0" stroke-width="1.5"/><path d="M9 4C9 2.5 11 2.5 11 4V10" fill="none" stroke="#e0e0e0" stroke-width="1.2"/><path d="M20.5 14C22 16 22.5 17.5 21.3 18.3C20.3 18.8 19.3 18 19.6 16.5Z" fill="#e0e0e0"/><path d="M24.5 16.5V20H21Z" fill="#c8c8c8"/></svg>
<svg class="a" style="left:4px;top:430px;" width="28" height="24" viewBox="0 0 28 24"><path d="M10 14.5C8 12.5 8.3 8.5 10.5 6.8C13 4.8 17.5 4.8 19.5 7C21.3 9 20.5 12 18 13.3L15.5 14.5L9.5 20.5C8.5 21.5 7 21 6.5 20C6 19 6.5 18 7.5 17.2Z" fill="#e0e0e0"/><path d="M11.5 15.5L14.5 12.8" stroke="#535353" stroke-width="1.1"/><path d="M24.5 16.5V20H21Z" fill="#c8c8c8"/></svg>
<svg class="a" style="left:4px;top:456px;" width="28" height="24" viewBox="0 0 28 24"><path d="M5 12.5C4 9 7.5 6 12 6C16.5 6 20 8.5 20 11.5L21 16L17 17C15 18.5 11 18.5 8.5 17.5C6.5 16.8 5.3 14.5 5 12.5Z" fill="#e0e0e0"/><circle cx="9.5" cy="12" r="2.3" fill="#535353"/><path d="M24.5 16.5V20H21Z" fill="#c8c8c8"/></svg>
<svg class="a" style="left:4px;top:482px;" width="28" height="24" viewBox="0 0 28 24"><path d="M5.5 20.5L7.5 13L13 7.5L18.5 13L11 18.5Z" fill="none" stroke="#e0e0e0" stroke-width="1.5" stroke-linejoin="round"/><path d="M13.2 5.5L16.5 2.3L21.7 7.5L18.5 10.8Z" fill="#e0e0e0"/><path d="M5.5 20.5L10.5 15.5" stroke="#e0e0e0" stroke-width="1.1"/><circle cx="11" cy="15" r="1.3" fill="#e0e0e0"/><path d="M24.5 16.5V20H21Z" fill="#c8c8c8"/></svg>
<svg class="a" style="left:4px;top:508px;" width="28" height="24" viewBox="0 0 28 24"><path d="M4.8 7.5V4.2H19.2V7.5" fill="none" stroke="#e0e0e0" stroke-width="1.8"/><path d="M12 4V19.5" stroke="#e0e0e0" stroke-width="2.4"/><path d="M8.3 19.8H15.7" stroke="#e0e0e0" stroke-width="1.7"/><path d="M24.5 16.5V20H21Z" fill="#c8c8c8"/></svg>
<svg class="a" style="left:4px;top:534px;" width="28" height="24" viewBox="0 0 28 24"><path d="M7.5 3.5L7.5 18.5L10.8 15.3L13.3 20.7L15.3 19.8L12.8 14.5H17.3Z" fill="#141414" stroke="#e0e0e0" stroke-width="1.2" stroke-linejoin="round"/><path d="M24.5 16.5V20H21Z" fill="#c8c8c8"/></svg>
<svg class="a" style="left:4px;top:560px;" width="28" height="24" viewBox="0 0 28 24"><path d="M12 5L19.5 18H4.5Z" fill="#6e6e6e" stroke="#e0e0e0" stroke-width="1.3" stroke-linejoin="round"/><path d="M24.5 16.5V20H21Z" fill="#c8c8c8"/></svg>
<svg class="a" style="left:4px;top:586px;" width="28" height="24" viewBox="0 0 28 24"><path d="M8 20C6 18 4.3 15.5 4.3 14.3C4.5 13.2 6 13 7.5 14.8V7C7.5 5.8 9.5 5.8 9.5 7V12V5C9.5 3.8 11.5 3.8 11.5 5V12V5.5C11.5 4.3 13.5 4.3 13.5 5.5V12V7.3C13.5 6.1 15.5 6.1 15.5 7.3V14.5C15.5 17.5 14.5 19.5 12.5 20.5Z" fill="#e0e0e0"/><path d="M9.5 8V12M11.5 7V12M13.5 8V12" stroke="#535353" stroke-width=".6"/><path d="M24.5 16.5V20H21Z" fill="#c8c8c8"/></svg>
<svg class="a" style="left:4px;top:612px;" width="28" height="24" viewBox="0 0 28 24"><circle cx="10.5" cy="10" r="6.3" fill="none" stroke="#e0e0e0" stroke-width="1.5"/><path d="M15 14.5L20 19.5" stroke="#e0e0e0" stroke-width="2.2"/><path d="M8 6.8A4 4 0 0 1 12.5 6.3" fill="none" stroke="#e0e0e0" stroke-width="1"/></svg>
<svg class="a" style="left:4px;top:638px;" width="28" height="24" viewBox="0 0 28 24"><circle cx="6.5" cy="12" r="1.9" fill="#e0e0e0"/><circle cx="12" cy="12" r="1.9" fill="#e0e0e0"/><circle cx="17.5" cy="12" r="1.9" fill="#e0e0e0"/><path d="M24.5 16.5V20H21Z" fill="#c8c8c8"/></svg>
<svg class="a" style="left:1px;top:667px;" width="12" height="13" viewBox="0 0 12 13"><rect x="1" y="1" width="6" height="6" fill="#111" stroke="#e0e0e0" stroke-width=".8"/><rect x="4.5" y="4.5" width="6" height="7" fill="#e0e0e0"/><rect x="1.5" y="1.5" width="5" height="5" fill="#111"/></svg>
<svg class="a" style="left:18px;top:667px;" width="12" height="13" viewBox="0 0 12 13"><path d="M2.5 5H9V11" fill="none" stroke="#e0e0e0" stroke-width="1.2"/><path d="M0.5 5L3.5 2.5V7.5ZM9 12.5L6.5 9.5H11.5Z" fill="#e0e0e0"/></svg>
<div class="a" style="left:11px;top:695px;width:18px;height:18px;background:#285a84;border:1px solid #e8e8e8"></div>
<div class="a" style="left:1px;top:685px;width:18px;height:18px;background:#ffffff;border:1px solid #bbb"></div>
<svg class="a" style="left:4px;top:721px;" width="28" height="24" viewBox="0 0 28 24"><rect x="3.5" y="3.5" width="17" height="13" rx="1" fill="none" stroke="#e0e0e0" stroke-width="1.2"/><circle cx="12" cy="10" r="4.3" fill="none" stroke="#e0e0e0" stroke-width="1.1" stroke-dasharray="1.5 1.2"/></svg>
<svg class="a" style="left:4px;top:747px;" width="28" height="24" viewBox="0 0 28 24"><rect x="3.5" y="9.5" width="11" height="8" fill="none" stroke="#e0e0e0" stroke-width="1.2"/><path d="M7.5 9.5V4.5H20.5V13.5H14.5" fill="none" stroke="#e0e0e0" stroke-width="1.2"/><path d="M24.5 16.5V20H21Z" fill="#c8c8c8"/></svg>
<div class="a" style="left:1264px;top:62px;width:37px;height:752px;background:#575757;"></div>
<div class="a" style="left:1301px;top:62px;width:2px;height:752px;background:#3c3c3c;"></div>
<div class="a" style="left:1303px;top:62px;width:233px;height:752px;background:#535353;"></div>
<div class="a" style="left:1303px;top:62px;width:233px;height:12px;background:#3f3f3f;"></div>
<div class="a" style="left:1303px;top:73px;width:233px;height:1px;background:#383838;"></div>
<svg class="a" style="left:1526px;top:64px;" width="9" height="8" viewBox="0 0 9 8"><path d="M1 1.5L3.5 4L1 6.5M4.5 1.5L7 4L4.5 6.5" fill="none" stroke="#d8d8d8" stroke-width="1.5"/></svg>
<div class="a" style="left:1303px;top:74px;width:233px;height:28px;background:#424242;"></div>
<div class="a" style="left:1303px;top:101px;width:233px;height:1px;background:#3c3c3c;"></div>
<svg class="a" style="left:1526px;top:85px;" width="9" height="8" viewBox="0 0 9 8"><path d="M0 1H9M0 3.5H9M0 6H9" stroke="#bdbdbd" stroke-width="1.2"/></svg>
<div class="a" style="left:1330px;top:109px;width:156px;height:188px;background:linear-gradient(to bottom,rgba(0,0,0,0) 0%,#000 100%),linear-gradient(to right,#fff 0%,#ff0000 100%)"></div>
<div class="a" style="left:1503px;top:109px;width:20px;height:188px;background:linear-gradient(to bottom,#ff0000 0%,#ff00ff 17%,#0000ff 33%,#00ffff 50%,#00ff00 67%,#ffff00 83%,#ff0000 100%)"></div>
<svg class="a" style="left:1494px;top:294px;" width="8" height="9" viewBox="0 0 8 9"><path d="M1.5 1L6.5 4.5L1.5 8Z" fill="#e8e8e8" stroke="#e8e8e8" stroke-linejoin="round"/></svg>
<div class="a" style="left:1303px;top:317px;width:233px;height:4px;background:#3a3a3a;"></div>
<div class="a" style="left:1303px;top:321px;width:233px;height:30px;background:#424242;"></div>
<div class="a" style="left:1409px;top:322px;width:1px;height:29px;background:#3c3c3c;"></div>
<div class="a" style="left:1453px;top:322px;width:1px;height:29px;background:#3c3c3c;"></div>
<div class="t" style="left:1358px;top:328.97px;font-size:11.5px;color:#c8c8c8;font-weight:700;transform:scaleX(0.9852);">Channels</div>
<div class="t" style="left:1419.7px;top:328.97px;font-size:11.5px;color:#c8c8c8;font-weight:700;transform:scaleX(0.8140);">Paths</div>
<svg class="a" style="left:1526px;top:333px;" width="9" height="8" viewBox="0 0 9 8"><path d="M0 1H9M0 3.5H9M0 6H9" stroke="#bdbdbd" stroke-width="1.2"/></svg>
<div class="a" style="left:1303px;top:351px;width:233px;height:31px;background:#535353;"></div>
<div class="a" style="left:1340px;top:359px;width:52px;height:19px;background:#585858;border:1px solid #5c5c5c;border-radius:2px"></div>
<svg class="a" style="left:1380px;top:366px;" width="8" height="6" viewBox="0 0 8 6"><path d="M1 1L4 4L7 1" fill="none" stroke="#6e6e6e" stroke-width="1"/></svg>
<svg class="a" style="left:1405px;top:362px;" width="14" height="13" viewBox="0 0 14 13"><rect x=".5" y="1.5" width="12" height="10" fill="none" stroke="#e0e0e0" stroke-width="1"/><path d="M2.5 9.5L5 5.5L7 8L8.5 6.5L10.5 9.5Z" fill="#e0e0e0"/></svg>
<svg class="a" style="left:1429px;top:362px;" width="13" height="13" viewBox="0 0 13 13"><circle cx="6.5" cy="6.5" r="5.3" fill="none" stroke="#e0e0e0" stroke-width="1.2"/><path d="M10.3 2.7A5.3 5.3 0 0 1 2.7 10.3Z" fill="#e0e0e0"/></svg>
<svg class="a" style="left:1453px;top:362px;" width="13" height="13" viewBox="0 0 13 13"><path d="M1 3V1H12V3M6.5 1V12M4 12H9" fill="none" stroke="#e0e0e0" stroke-width="1.6"/></svg>
<svg class="a" style="left:1477px;top:362px;" width="14" height="13" viewBox="0 0 14 13"><rect x="2" y="2" width="10" height="9" fill="none" stroke="#e0e0e0" stroke-width="1.2"/><rect x=".5" y=".5" width="3" height="3" fill="#535353" stroke="#e0e0e0" stroke-width=".8"/><rect x="10.5" y=".5" width="3" height="3" fill="#535353" stroke="#e0e0e0" stroke-width=".8"/><rect x=".5" y="9.5" width="3" height="3" fill="#535353" stroke="#e0e0e0" stroke-width=".8"/><rect x="10.5" y="9.5" width="3" height="3" fill="#535353" stroke="#e0e0e0" stroke-width=".8"/></svg>
<svg class="a" style="left:1502px;top:361px;" width="13" height="15" viewBox="0 0 13 15"><path d="M4.5 1.5H9L11.5 4V11.5H4.5Z" fill="none" stroke="#e0e0e0" stroke-width="1.1"/><rect x="1.5" y="7" width="5.5" height="6" fill="#e0e0e0"/></svg>
<svg class="a" style="left:1523px;top:358px;" width="14" height="20" viewBox="0 0 14 20"><rect x="1.5" y="3.5" width="9" height="15" rx="4.5" fill="none" stroke="#3e3e3e" stroke-width="1"/><circle cx="6" cy="6" r="4.5" fill="#e8e8e8"/></svg>
<div class="a" style="left:1303px;top:382px;width:233px;height:1px;background:#4a4a4a;"></div>
<div class="a" style="left:1340px;top:388px;width:96px;height:18px;background:#585858;border:1px solid #5c5c5c;border-radius:2px"></div>
<svg class="a" style="left:1425px;top:394px;" width="8" height="6" viewBox="0 0 8 6"><path d="M1 1L4 4L7 1" fill="none" stroke="#6e6e6e" stroke-width="1"/></svg>
<div class="t" style="left:1442px;top:391.19px;font-size:11px;color:#d2d2d2;font-weight:400;transform:scaleX(0.9292);">Opacity:</div>
<div class="a" style="left:1484px;top:388px;width:49px;height:18px;background:#4a4a4a;border:1px solid #444;border-radius:2px"></div>
<div class="a" style="left:1518px;top:389px;width:1px;height:16px;background:#404040;"></div>
<div class="t" style="left:1487px;top:391.19px;font-size:11px;color:#6a6a6a;font-weight:400;transform:scaleX(0.9950);">100%</div>
<svg class="a" style="left:1521px;top:394px;" width="8" height="6" viewBox="0 0 8 6"><path d="M1 1L4 4L7 1" fill="none" stroke="#c8c8c8" stroke-width="1"/></svg>
<div class="a" style="left:1303px;top:409px;width:233px;height:1px;background:#4a4a4a;"></div>
<svg class="a" style="left:1362px;top:416px;" width="14" height="17" viewBox="0 0 14 17"><path d="M13 1L6 10L8 12Z" fill="#9a9a9a"/><path d="M5.5 10.5C3.5 10.5 2.5 12 2 14C1.8 15 1.2 15.6 .5 16C3 16.5 6.5 15.5 7.3 12.5Z" fill="#9a9a9a"/></svg>
<svg class="a" style="left:1384px;top:416px;" width="15" height="15" viewBox="0 0 15 15"><path d="M7.5 1V14M1 7.5H14" stroke="#e0e0e0" stroke-width="1.4"/><path d="M7.5 0L10 3H5ZM7.5 15L10 12H5ZM0 7.5L3 5V10ZM15 7.5L12 5V10Z" fill="#e0e0e0"/></svg>
<svg class="a" style="left:1405px;top:415px;" width="16" height="16" viewBox="0 0 16 16"><path d="M3.5 1V13.5H15M1 3.5H11L13.5 6V15" fill="none" stroke="#e0e0e0" stroke-width="1.2"/><path d="M12 1L14.5 3.5" stroke="#e0e0e0" stroke-width="1"/></svg>
<svg class="a" style="left:1429px;top:415px;" width="13" height="16" viewBox="0 0 13 16"><path d="M3.5 7V4.5A3 3 0 0 1 9.5 4.5V7" fill="none" stroke="#e0e0e0" stroke-width="1.6"/><rect x="1.5" y="7" width="10" height="8" fill="#e0e0e0"/><circle cx="6.5" cy="11" r="1.1" fill="#535353"/></svg>
<div class="t" style="left:1464px;top:418.19px;font-size:11px;color:#d2d2d2;font-weight:400;transform:scaleX(0.9059);">Fill:</div>
<div class="a" style="left:1484px;top:415px;width:49px;height:18px;background:#4a4a4a;border:1px solid #444;border-radius:2px"></div>
<div class="a" style="left:1518px;top:416px;width:1px;height:16px;background:#404040;"></div>
<div class="t" style="left:1487px;top:418.19px;font-size:11px;color:#6a6a6a;font-weight:400;transform:scaleX(0.9950);">100%</div>
<svg class="a" style="left:1521px;top:421px;" width="8" height="6" viewBox="0 0 8 6"><path d="M1 1L4 4L7 1" fill="none" stroke="#c8c8c8" stroke-width="1"/></svg>
<div class="a" style="left:1303px;top:440px;width:233px;height:354px;background:#505050;"></div>
<div class="a" style="left:1523px;top:440px;width:13px;height:354px;background:#4c4c4c;"></div>
<div class="a" style="left:1303px;top:440px;width:220px;height:39px;background:#696969;"></div>
<div class="a" style="left:1303px;top:479px;width:220px;height:1px;background:#4a4a4a;"></div>
<div class="a" style="left:1303px;top:480px;width:220px;height:42px;background:#535353;"></div>
<svg class="a" style="left:1355px;top:444px;" width="70" height="34" viewBox="0 0 70 34"><rect x="6.5" y="1.5" width="9" height="31" fill="#333" stroke="#d8d8d8" stroke-width="1"/><rect x="8" y="4" width="6" height="4" fill="#c8c8c8"/><rect x="8" y="9.5" width="6" height="4" fill="#9a9a9a"/><rect x="8" y="15" width="6" height="4" fill="#c8c8c8"/><rect x="8" y="20.5" width="6" height="4" fill="#9a9a9a"/><rect x="8" y="26" width="6" height="4" fill="#c8c8c8"/><path d="M20.5 12.5V10.5A2.5 2.5 0 0 1 25.5 10.5V15.5M20.5 18.5V21.5A2.5 2.5 0 0 0 25.5 21.5V17" fill="none" stroke="#c0c0c0" stroke-width="1.3"/></svg>
<div class="a" style="left:1384px;top:444px;width:32px;height:33px;background:#ffffff;border:1px solid #2e2e2e"></div>
<div class="t" style="left:1425px;top:455.61px;font-size:10.5px;color:#e2e2e2;font-weight:400;transform:scaleX(0.9333);">Gradient Fill 1</div>
<div class="a" style="left:1362px;top:487px;width:6px;height:29px;background:#d6d6d6;border:1px solid #444"></div>
<div class="t" style="left:1379px;top:497.11px;font-size:10.5px;color:#e2e2e2;font-weight:400;transform:scaleX(0.9277);">Layer 0</div>
<div class="a" style="left:1303px;top:794px;width:233px;height:1px;background:#444444;"></div>
<div class="a" style="left:1303px;top:795px;width:233px;height:19px;background:#535353;"></div>
<svg class="a" style="left:1335px;top:802px;" width="16" height="10" viewBox="0 0 16 10"><path d="M6 1.5H4A3.5 3.5 0 0 0 4 8.5H6M10 1.5H12A3.5 3.5 0 0 1 12 8.5H10M5 5H11" fill="none" stroke="#9a9a9a" stroke-width="1.4"/></svg>
<div class="t" style="left:1364px;top:800.50px;font-size:13px;color:#d8d8d8;font-weight:400;font-style:italic;font-family:"Liberation Serif",serif">fx</div>
<svg class="a" style="left:1390px;top:801px;" width="14" height="11" viewBox="0 0 14 11"><rect x=".5" y=".5" width="13" height="10" fill="#d8d8d8"/><ellipse cx="7" cy="5.5" rx="3" ry="2.8" fill="#535353"/></svg>
<svg class="a" style="left:1417px;top:801px;" width="13" height="13" viewBox="0 0 13 13"><circle cx="6.5" cy="6.5" r="5.5" fill="none" stroke="#d8d8d8" stroke-width="1.3"/><path d="M10.5 2.5A5.5 5.5 0 0 1 2.5 10.5Z" fill="#d8d8d8"/></svg>
<svg class="a" style="left:1445px;top:801px;" width="14" height="12" viewBox="0 0 14 12"><path d="M.5 2V11.5H13.5V3.5H6.5L5 1.5H1Z" fill="#d8d8d8"/></svg>
<svg class="a" style="left:1471px;top:800px;" width="14" height="14" viewBox="0 0 14 14"><rect x="1" y="1" width="12" height="12" fill="none" stroke="#d8d8d8" stroke-width="1.3"/><path d="M7 4V10M4 7H10" stroke="#d8d8d8" stroke-width="1.5"/></svg>
<svg class="a" style="left:1498px;top:800px;" width="13" height="14" viewBox="0 0 13 14"><path d="M1 3H12M4.5 3V1.5H8.5V3M2.5 3.5L3.2 13H9.8L10.5 3.5" fill="none" stroke="#d8d8d8" stroke-width="1.2"/><path d="M5 5.5V11M6.5 5.5V11M8 5.5V11" stroke="#d8d8d8" stroke-width=".8"/></svg>
<div class="a" style="left:567px;top:141px;width:400px;height:293px;background:#535353;border-radius:8px 8px 7px 7px;overflow:hidden;box-shadow:0 12px 40px rgba(0,0,0,.5),0 2px 6px rgba(0,0,0,.25)"><div class="a" style="left:0;top:0;width:400px;height:30px;background:#f3f3f3"></div></div>
<div class="t" style="left:575.5px;top:151.04px;font-size:12px;color:#2a2a2a;font-weight:400;transform:scaleX(0.9739);">Gradient Fill</div>
<div class="t" style="left:582.8px;top:188.24px;font-size:12px;color:#d4d4d4;font-weight:400;transform:scaleX(0.9725);">Gradient:</div>
<div class="a" style="left:639px;top:183px;width:112px;height:24px;border:1px solid #3c3c3c;background:linear-gradient(90deg,#6f48be 0%,#7a58d6 25%,#8a69ea 50%,#8466e6 75%,#6f55cf 100%)"></div>
<div class="a" style="left:751px;top:183px;width:14px;height:24px;background:#454545;border:1px solid #4c4c4c"></div>
<svg class="a" style="left:754px;top:192px;" width="8" height="6" viewBox="0 0 8 6"><path d="M1 1L4 4L7 1" fill="none" stroke="#c8c8c8" stroke-width="1"/></svg>
<div class="t" style="left:601.7px;top:220.04px;font-size:12px;color:#d4d4d4;font-weight:400;transform:scaleX(0.9662);">Style:</div>
<div class="a" style="left:639px;top:217px;width:76px;height:20px;background:#454545;border:1px solid #4c4c4c;border-radius:2px"></div>
<div class="t" style="left:646.8px;top:221.34px;font-size:12px;color:#e4e4e4;font-weight:400;transform:scaleX(0.9742);">Linear</div>
<svg class="a" style="left:703px;top:224px;" width="8" height="6" viewBox="0 0 8 6"><path d="M1 1L4 4L7 1" fill="none" stroke="#c8c8c8" stroke-width="1"/></svg>
<div class="t" style="left:598.7px;top:255.84px;font-size:12px;color:#d4d4d4;font-weight:400;transform:scaleX(0.9403);">Angle:</div>
<svg class="a" style="left:636px;top:243px;" width="38" height="38" viewBox="0 0 38 38"><circle cx="19.2" cy="19.1" r="17.7" fill="none" stroke="#9a9a9a" stroke-width="1"/><path d="M19.2 4.3V19" stroke="#c8c8c8" stroke-width="1"/><circle cx="19.2" cy="19" r="1.6" fill="#c8c8c8"/></svg>
<div class="a" style="left:681px;top:251px;width:84px;height:21px;background:#454545;border:1px solid #4c4c4c"></div>
<div class="t" style="left:687px;top:256.34px;font-size:12px;color:#e8e8e8;font-weight:400;transform:scaleX(0.8608);">90</div>
<svg class="a" style="left:770px;top:257px;" width="6" height="6" viewBox="0 0 6 6"><circle cx="3" cy="3" r="1.8" fill="none" stroke="#c8c8c8" stroke-width="1"/></svg>
<div class="t" style="left:599.4px;top:292.34px;font-size:12px;color:#d4d4d4;font-weight:400;transform:scaleX(0.9293);">Scale:</div>
<div class="a" style="left:639px;top:288px;width:69px;height:20px;background:#454545;border:1px solid #4c4c4c;border-radius:2px"></div>
<div class="a" style="left:692px;top:289px;width:1px;height:18px;background:#3e3e3e;"></div>
<div class="t" style="left:643.5px;top:292.84px;font-size:12px;color:#e8e8e8;font-weight:400;transform:scaleX(0.9771);">100%</div>
<svg class="a" style="left:696px;top:295px;" width="8" height="6" viewBox="0 0 8 6"><path d="M1 1L4 4L7 1" fill="none" stroke="#c8c8c8" stroke-width="1"/></svg>
<div class="a" style="left:637.5px;top:320.5px;width:12px;height:12px;background:#535353;border:1px solid #3e3e3e;border-radius:2px"></div>
<div class="t" style="left:656px;top:320.84px;font-size:12px;color:#d4d4d4;font-weight:400;transform:scaleX(0.9510);">Reverse</div>
<div class="a" style="left:728.5px;top:320.5px;width:12px;height:12px;background:#535353;border:1px solid #3e3e3e;border-radius:2px"></div>
<div class="t" style="left:747.5px;top:320.84px;font-size:12px;color:#d4d4d4;font-weight:400;transform:scaleX(0.9839);">Dither</div>
<div class="a" style="left:637.5px;top:347px;width:12px;height:12px;background:#e6e6e6;border-radius:2px"></div>
<svg class="a" style="left:637.5px;top:347px;" width="12" height="12" viewBox="0 0 12 12"><path d="M2.5 6L5 8.5L9.5 3.3" fill="none" stroke="#2a2a2a" stroke-width="1.7"/></svg>
<div class="t" style="left:656px;top:347.04px;font-size:12px;color:#d4d4d4;font-weight:400;transform:scaleX(1.0037);">Align with layer</div>
<div class="a" style="left:639px;top:371px;width:112px;height:25px;background:#454545;border:1px solid #4c4c4c;border-radius:2px"></div>
<div class="t" style="left:651px;top:377.34px;font-size:12px;color:#e0e0e0;font-weight:400;transform:scaleX(0.9898);">Reset Alignment</div>
<div class="t" style="left:586.7px;top:408.54px;font-size:12px;color:#d4d4d4;font-weight:400;transform:scaleX(1.0148);">Method:</div>
<div class="a" style="left:639px;top:406px;width:84px;height:21px;background:#454545;border:1px solid #4c4c4c;border-radius:2px"></div>
<div class="t" style="left:646.8px;top:409.84px;font-size:12px;color:#e4e4e4;font-weight:400;transform:scaleX(0.9673);">Perceptual</div>
<svg class="a" style="left:713px;top:414px;" width="8" height="6" viewBox="0 0 8 6"><path d="M1 1L4 4L7 1" fill="none" stroke="#c8c8c8" stroke-width="1"/></svg>
<div class="a" style="left:884px;top:182px;width:70px;height:25px;border:1.6px solid #d0d0d0;border-radius:13px"></div>
<div class="a" style="left:884px;top:216px;width:70px;height:25px;border:1px solid #6c6c6c;border-radius:13px"></div>
<div class="t" style="left:896px;top:223.84px;font-size:12px;color:#e0e0e0;font-weight:400;">C</div>
<div class="a" style="left:902px;top:47.5px;width:461px;height:531px;background:#535353;border-radius:8px 8px 7px 7px;overflow:hidden;box-shadow:0 12px 42px rgba(0,0,0,.42),0 1px 4px rgba(0,0,0,.2)"><div class="a" style="left:0;top:0;width:460px;height:30px;background:#f3f3f3"></div></div>
<div class="t" style="left:910.5px;top:56.54px;font-size:12px;color:#2a2a2a;font-weight:400;transform:scaleX(0.9849);">Gradient Editor</div>
<div class="a" style="left:1240px;top:61px;width:10px;height:1px;background:#b8b8b8;"></div>
<svg class="a" style="left:1285px;top:56px;" width="12" height="12" viewBox="0 0 12 12"><rect x="1" y="1.5" width="9.5" height="9.5" fill="none" stroke="#1c1c1c" stroke-width="1.1"/></svg>
<svg class="a" style="left:1332px;top:56px;" width="12" height="12" viewBox="0 0 12 12"><path d="M1.5 1.5L11 11M11 1.5L1.5 11" stroke="#1c1c1c" stroke-width="1.1"/></svg>
<div class="a" style="left:913px;top:95px;width:348px;height:175px;background:transparent;border:1px solid #474747;border-radius:2px"></div>
<div class="a" style="left:926px;top:90px;width:56px;height:10px;background:#535353;"></div>
<div class="t" style="left:933.5px;top:88.84px;font-size:12px;color:#e4e4e4;font-weight:400;transform:scaleX(0.9217);">Presets</div>
<svg class="a" style="left:1213px;top:88px;" width="18" height="13" viewBox="0 0 18 13"><g transform="translate(6,6.5)"><circle r="3.6" fill="none" stroke="#e6e6e6" stroke-width="2.6" stroke-dasharray="1.8 1.04"/><circle r="3.2" fill="#e6e6e6"/><circle r="1.3" fill="#535353"/></g><path d="M13 8.5H17L15 10.5Z" fill="#cfcfcf"/></svg>
<div class="a" style="left:923px;top:110.5px;width:327px;height:150px;background:#424242;"></div>
<div class="a" style="left:923px;top:139px;width:311px;height:1px;background:#474747;"></div>
<div class="a" style="left:923px;top:168px;width:311px;height:1px;background:#474747;"></div>
<div class="a" style="left:923px;top:197.5px;width:311px;height:63px;background:#484848;"></div>
<svg class="a" style="left:931.5px;top:121.5px;" width="6" height="10" viewBox="0 0 6 10"><path d="M1 .5L4.5 5L1 9.5" fill="none" stroke="#bdbdbd" stroke-width="1"/></svg>
<svg class="a" style="left:931.5px;top:150.5px;" width="6" height="10" viewBox="0 0 6 10"><path d="M1 .5L4.5 5L1 9.5" fill="none" stroke="#bdbdbd" stroke-width="1"/></svg>
<svg class="a" style="left:930px;top:180px;" width="10" height="6" viewBox="0 0 10 6"><path d="M.5 .5L5 5L9.5 .5" fill="none" stroke="#bdbdbd" stroke-width="1"/></svg>
<svg class="a" style="left:943.5px;top:119px;" width="16" height="13" viewBox="0 0 16 13"><rect x="1" y="0" width="7" height="2.5" rx=".5" fill="#cfcfcf"/><rect x="0.5" y="2" width="14.5" height="10" rx=".5" fill="#dcdcdc"/></svg>
<svg class="a" style="left:943.5px;top:148px;" width="16" height="13" viewBox="0 0 16 13"><rect x="1" y="0" width="7" height="2.5" rx=".5" fill="#cfcfcf"/><rect x="0.5" y="2" width="14.5" height="10" rx=".5" fill="#dcdcdc"/></svg>
<svg class="a" style="left:943.5px;top:177px;" width="16" height="13" viewBox="0 0 16 13"><path d="M.5 .5H7L8.5 2.5H15V12H.5Z" fill="#dcdcdc"/><path d="M1.5 5.5H14" stroke="#424242" stroke-width="1.5"/></svg>
<div class="t" style="left:967.6px;top:121.11px;font-size:10.5px;color:#e0e0e0;font-weight:400;transform:scaleX(0.9051);">Basics</div>
<div class="t" style="left:967.6px;top:150.11px;font-size:10.5px;color:#e0e0e0;font-weight:400;transform:scaleX(0.9137);">Blues</div>
<div class="t" style="left:967.6px;top:179.11px;font-size:10.5px;color:#e0e0e0;font-weight:400;transform:scaleX(0.9267);">Purples</div>
<div class="a" style="left:944.5px;top:199px;width:30px;height:30.5px;background:linear-gradient(135deg,#ee70d8 0%,#e270da 55%,#b060e8 100%)"></div>
<div class="a" style="left:976.6px;top:199px;width:30px;height:30.5px;background:linear-gradient(135deg,#1ed8dc 0%,#2ad0e0 28%,#a0a8e8 50%,#e058f0 70%,#ff10f0 100%)"></div>
<div class="a" style="left:1008.7px;top:199px;width:30px;height:30.5px;background:linear-gradient(135deg,#e0208a 0%,#d040a0 25%,#c080c8 50%,#8aa0e0 70%,#50a0f0 100%)"></div>
<div class="a" style="left:1040.8px;top:199px;width:30px;height:30.5px;background:linear-gradient(135deg,#40c0ff 0%,#48b8ff 25%,#8080f0 55%,#c040f0 100%)"></div>
<div class="a" style="left:1072.9px;top:199px;width:30px;height:30.5px;background:linear-gradient(135deg,#7878ff 0%,#8070f8 30%,#9c5cf0 60%,#c028e8 100%)"></div>
<div class="a" style="left:1105.0px;top:199px;width:30px;height:30.5px;background:linear-gradient(135deg,#9a30e6 0%,#8a48d8 45%,#6a68c8 75%,#5e78c4 100%)"></div>
<div class="a" style="left:1137.1px;top:199px;width:30px;height:30.5px;background:linear-gradient(135deg,#a020f0 0%,#8a22f0 40%,#6020f0 70%,#4010ff 100%)"></div>
<div class="a" style="left:1169.2px;top:199px;width:30px;height:30.5px;background:linear-gradient(135deg,#7048c8 0%,#7c58d4 35%,#8a64e0 50%,#7c58d4 65%,#7048c8 100%)"></div>
<div class="a" style="left:1201.3px;top:199px;width:30px;height:30.5px;background:linear-gradient(135deg,#80c8e0 0%,#90b8e0 30%,#a0a0e0 50%,#8058e0 100%)"></div>
<div class="a" style="left:944.5px;top:231px;width:30px;height:29.5px;background:linear-gradient(135deg,#90d0d8 0%,#80b8e0 35%,#4a84e0 55%,#2a40d8 75%,#2038d8 100%)"></div>
<div class="a" style="left:976.6px;top:231px;width:30px;height:29.5px;background:linear-gradient(135deg,#90d4dc 0%,#90ccdc 30%,#98a8e0 55%,#7e58e0 100%)"></div>
<div class="a" style="left:1008.7px;top:231px;width:30px;height:29.5px;background:linear-gradient(135deg,#e8b0d0 0%,#d098d8 35%,#a870e8 60%,#7030f0 100%)"></div>
<div class="a" style="left:1040.8px;top:231px;width:30px;height:29.5px;background:linear-gradient(135deg,#7f8ce0 0%,#8490e0 25%,#a49ae8 55%,#d8a8ff 75%,#e0a8ff 100%)"></div>
<div class="a" style="left:1072.9px;top:231px;width:30px;height:29.5px;background:linear-gradient(135deg,#f06aa0 0%,#e070b8 30%,#b888e0 55%,#9090f0 100%)"></div>
<div class="a" style="left:1105.0px;top:231px;width:30px;height:29.5px;background:linear-gradient(135deg,#a8a8e8 0%,#a8a0dc 45%,#a090c8 65%,#966aa6 100%)"></div>
<div class="a" style="left:1137.1px;top:231px;width:30px;height:29.5px;background:linear-gradient(135deg,#b8b0ec 0%,#a8a4dc 40%,#7a80b8 65%,#4e5e90 100%)"></div>
<div class="a" style="left:1169.2px;top:231px;width:30px;height:29.5px;background:linear-gradient(135deg,#e8208c 0%,#d03898 30%,#8a4cbc 55%,#2a58d0 75%,#2258d0 100%)"></div>
<div class="a" style="left:1201.3px;top:231px;width:30px;height:29.5px;background:linear-gradient(135deg,#e83aa8 0%,#d040a8 40%,#a050b8 60%,#3a6ac8 100%)"></div>
<div class="a" style="left:1168px;top:198px;width:32.5px;height:32px;border:2px solid #1ab2ea"></div>
<div class="a" style="left:1234px;top:110.5px;width:16px;height:150px;background:#4a4a4a;"></div>
<svg class="a" style="left:1239px;top:118px;" width="9" height="6" viewBox="0 0 9 6"><path d="M.5 5L4.5 1L8.5 5" fill="none" stroke="#8a8a8a" stroke-width="1"/></svg>
<div class="a" style="left:1237px;top:128px;width:11px;height:38px;background:#6a6a6a;border-radius:1px"></div>
<svg class="a" style="left:1239px;top:247px;" width="9" height="6" viewBox="0 0 9 6"><path d="M.5 1L4.5 5L8.5 1" fill="none" stroke="#8a8a8a" stroke-width="1"/></svg>
<div class="a" style="left:1270px;top:94.5px;width:81.5px;height:25px;border:1.6px solid #d8d8d8;border-radius:12.5px"></div>
<div class="t" style="left:1302px;top:101.72px;font-size:12.5px;color:#e6e6e6;font-weight:400;transform:scaleX(0.8858);">OK</div>
<div class="a" style="left:1270px;top:129px;width:81.5px;height:24.5px;border:1px solid #747474;border-radius:12.25px"></div>
<div class="t" style="left:1293px;top:136.02px;font-size:12.5px;color:#e6e6e6;font-weight:400;transform:scaleX(0.9121);">Cancel</div>
<div class="a" style="left:1270px;top:163.5px;width:81.5px;height:24.5px;border:1px solid #747474;border-radius:12.25px"></div>
<div class="t" style="left:1286.6px;top:170.42px;font-size:12.5px;color:#e6e6e6;font-weight:400;transform:scaleX(1.0688);">Import...</div>
<div class="a" style="left:1270px;top:198px;width:81.5px;height:24.5px;border:1px solid #747474;border-radius:12.25px"></div>
<div class="t" style="left:1286.6px;top:204.92px;font-size:12.5px;color:#e6e6e6;font-weight:400;transform:scaleX(1.0527);">Export...</div>
<div class="a" style="left:1275.5px;top:281.5px;width:75px;height:24.5px;border:1px solid #747474;border-radius:12.25px"></div>
<div class="t" style="left:1301.5px;top:288.42px;font-size:12.5px;color:#e6e6e6;font-weight:400;transform:scaleX(0.9394);">New</div>
<div class="t" style="left:913.8px;top:288.34px;font-size:12px;color:#d4d4d4;font-weight:400;transform:scaleX(0.9620);">Name:</div>
<div class="a" style="left:961px;top:282px;width:237px;height:21px;background:#454545;border:1px solid #555"></div>
<div class="t" style="left:967px;top:287.34px;font-size:12px;color:#e8e8e8;font-weight:400;transform:scaleX(0.9320);">Purple_08</div>
<div class="t" style="left:914.7px;top:319.54px;font-size:12px;color:#d4d4d4;font-weight:400;transform:scaleX(1.0729);">Type:</div>
<div class="a" style="left:957px;top:315px;width:56px;height:21px;background:#454545;border:1px solid #4c4c4c;border-radius:2px"></div>
<div class="t" style="left:965px;top:319.84px;font-size:12px;color:#e8e8e8;font-weight:400;transform:scaleX(0.9368);">Solid</div>
<svg class="a" style="left:1002px;top:323px;" width="8" height="6" viewBox="0 0 8 6"><path d="M1 1L4 4L7 1" fill="none" stroke="#c8c8c8" stroke-width="1"/></svg>
<div class="t" style="left:926px;top:358.34px;font-size:12px;color:#d4d4d4;font-weight:400;transform:scaleX(0.9922);">Smoothness:</div>
<div class="a" style="left:1002.5px;top:355px;width:61px;height:19px;background:#454545;border:1px solid #4c4c4c;border-radius:2px"></div>
<div class="a" style="left:1049px;top:356px;width:1px;height:17px;background:#3e3e3e;"></div>
<div class="t" style="left:1008px;top:358.84px;font-size:12px;color:#e8e8e8;font-weight:400;transform:scaleX(1.0097);">100%</div>
<svg class="a" style="left:1053px;top:362px;" width="8" height="6" viewBox="0 0 8 6"><path d="M1 1L4 4L7 1" fill="none" stroke="#c8c8c8" stroke-width="1"/></svg>
<div class="a" style="left:927.5px;top:400px;width:408px;height:25px;background:linear-gradient(90deg,#6f47bd 0%,#7a55d2 25%,#8565e4 50%,#8667e8 62%,#7b5fdc 80%,#6e57cf 100%)"></div>
<svg class="a" style="left:924px;top:382px;" width="11" height="18" viewBox="0 0 11 18"><rect x="1" y="1.2" width="8.8" height="9" fill="#000" stroke="#e4e4e4" stroke-width="1.3"/><path d="M.2 12H10.6L5.4 17Z" fill="#8e8e8e"/></svg>
<svg class="a" style="left:1326.5px;top:382px;" width="11" height="18" viewBox="0 0 11 18"><rect x="1" y="1.2" width="8.8" height="9" fill="#000" stroke="#e4e4e4" stroke-width="1.3"/><path d="M.2 12H10.6L5.4 17Z" fill="#8e8e8e"/></svg>
<svg class="a" style="left:924px;top:425px;" width="11" height="19" viewBox="0 0 11 19"><path d="M.2 6.5H10.6L5.4 1.5Z" fill="#8e8e8e"/><rect x="1" y="8" width="8.8" height="9.5" fill="#6f47bd" stroke="#ececec" stroke-width="1.3"/></svg>
<svg class="a" style="left:1126px;top:425px;" width="11" height="19" viewBox="0 0 11 19"><path d="M.2 6.5H10.6L5.4 1.5Z" fill="#8e8e8e"/><rect x="1" y="8" width="8.8" height="9.5" fill="#8466e6" stroke="#ececec" stroke-width="1.3"/></svg>
<svg class="a" style="left:1326.5px;top:425px;" width="11" height="19" viewBox="0 0 11 19"><path d="M.2 6.5H10.6L5.4 1.5Z" fill="#8e8e8e"/><rect x="1" y="8" width="8.8" height="9.5" fill="#6e57cf" stroke="#ececec" stroke-width="1.3"/></svg>
<div class="a" style="left:923.5px;top:459px;width:418.5px;height:87.5px;background:transparent;border:1px solid #474747;border-radius:2px"></div>
<div class="a" style="left:936px;top:452px;width:44px;height:12px;background:#535353;"></div>
<div class="t" style="left:943.5px;top:453.24px;font-size:12px;color:#e4e4e4;font-weight:400;transform:scaleX(0.9939);">Stops</div>
<div class="t" style="left:950.5px;top:481.84px;font-size:12px;color:#858585;font-weight:400;transform:scaleX(1.0224);">Opacity:</div>
<div class="a" style="left:1003px;top:479px;width:61px;height:18px;background:#4b4b4b;border:1px solid #4f4f4f"></div>
<div class="a" style="left:1004px;top:480px;width:44px;height:16px;background:#474747;"></div>
<div class="a" style="left:1049px;top:480px;width:1px;height:16px;background:#4f4f4f;"></div>
<svg class="a" style="left:1053px;top:485px;" width="8" height="6" viewBox="0 0 8 6"><path d="M1 1L4 4L7 1" fill="none" stroke="#6a6a6a" stroke-width="1"/></svg>
<div class="t" style="left:1187.6px;top:481.84px;font-size:12px;color:#858585;font-weight:400;transform:scaleX(1.0061);">Location:</div>
<div class="a" style="left:1245px;top:477px;width:41px;height:21px;background:#4b4b4b;border:1px solid #4f4f4f"></div>
<div class="a" style="left:1247px;top:479px;width:37px;height:17px;background:#474747;"></div>
<svg class="a" style="left:1298.5px;top:481px;" width="12" height="13" viewBox="0 0 12 13"><path d="M.5 2.5H11.5M4 2.5V1H8V2.5M1.8 3L2.5 12.5H9.5L10.2 3Z" fill="none" stroke="#8a8a8a" stroke-width="1"/><path d="M4.3 4.5V11M6 4.5V11M7.7 4.5V11" stroke="#8a8a8a" stroke-width=".8"/></svg>
<div class="t" style="left:963.6px;top:517.64px;font-size:12px;color:#858585;font-weight:400;transform:scaleX(0.9839);">Color:</div>
<div class="a" style="left:997.5px;top:513px;width:44px;height:21px;background:#535353;border:1px solid #3a3a3a"></div>
<svg class="a" style="left:1046px;top:524px;" width="8" height="6" viewBox="0 0 8 6"><path d="M1 1L4 4L7 1" fill="none" stroke="#6a6a6a" stroke-width="1"/></svg>
<div class="t" style="left:1187.6px;top:517.64px;font-size:12px;color:#858585;font-weight:400;transform:scaleX(1.0061);">Location:</div>
<div class="a" style="left:1245px;top:512.5px;width:41px;height:21px;background:#4b4b4b;border:1px solid #4f4f4f"></div>
<div class="a" style="left:1247px;top:514.5px;width:37px;height:17px;background:#474747;"></div>
<svg class="a" style="left:1298.5px;top:517.5px;" width="12" height="13" viewBox="0 0 12 13"><path d="M.5 2.5H11.5M4 2.5V1H8V2.5M1.8 3L2.5 12.5H9.5L10.2 3Z" fill="none" stroke="#8a8a8a" stroke-width="1"/><path d="M4.3 4.5V11M6 4.5V11M7.7 4.5V11" stroke="#8a8a8a" stroke-width=".8"/></svg>
</body></html>
